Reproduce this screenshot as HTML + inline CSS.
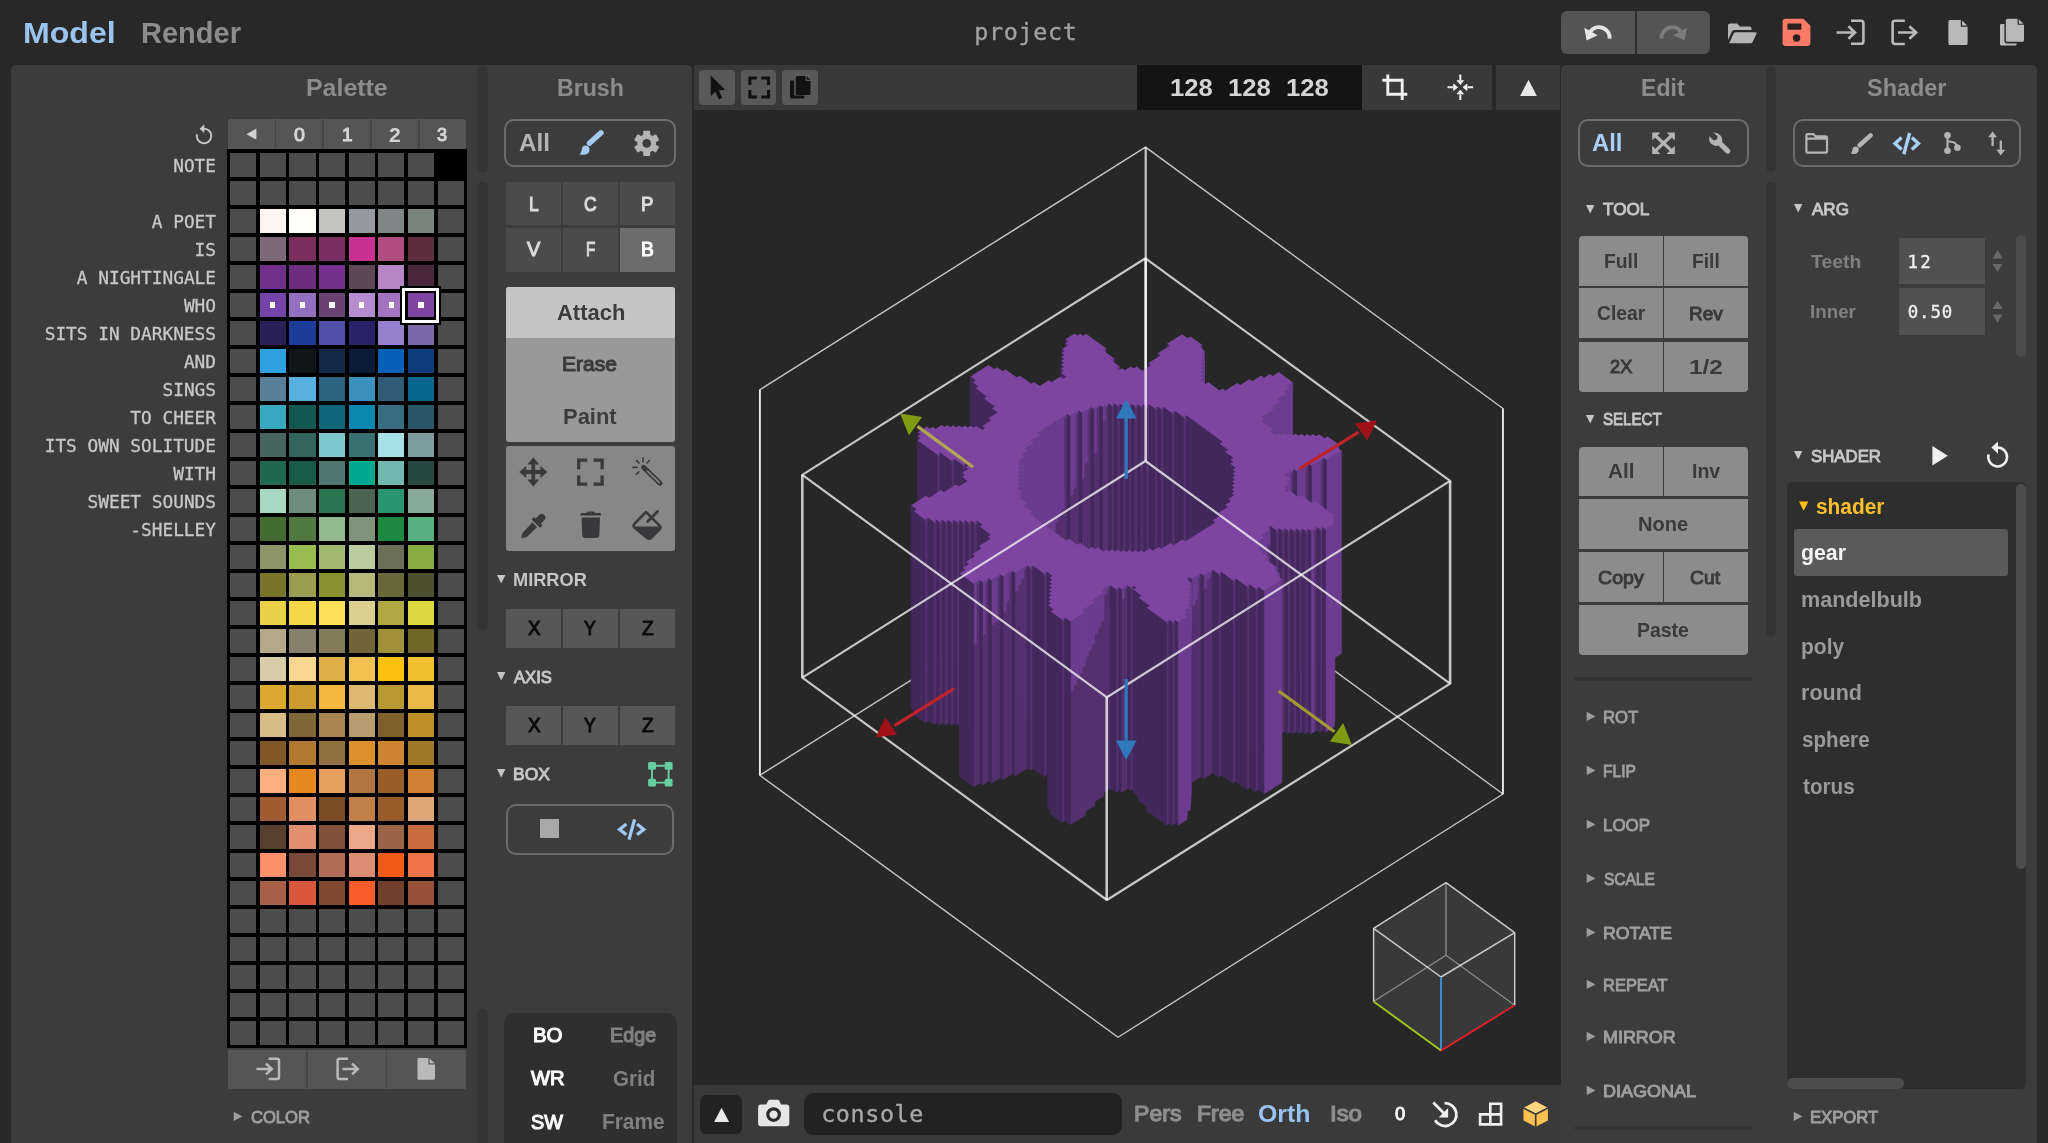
<!DOCTYPE html>
<html lang="en">
<head>
<meta charset="utf-8">
<title>MagicaVoxel - project</title>
<style>
html,body{margin:0;padding:0;}
body{width:2048px;height:1143px;overflow:hidden;background:#282828;position:relative;
 font-family:"Liberation Sans",sans-serif;font-weight:bold;color:#a0a0a0;}
.a{position:absolute;}
.t{position:absolute;white-space:nowrap;line-height:1;}
.c{text-align:center;}
.r{text-align:right;}
.m{font-family:"DejaVu Sans Mono","Liberation Mono",monospace;font-weight:normal;}
.pan{position:absolute;background:#3c3c3c;}
.trk{position:absolute;background:#343434;border-radius:5px;}
.btn{position:absolute;background:#8c8c8c;color:#3a3a3a;font-size:20px;line-height:1;text-align:center;border-radius:3px;}
.dk{position:absolute;background:#4b4b4b;color:#d2d2d2;font-size:23px;line-height:1;text-align:center;}
.sec{position:absolute;white-space:nowrap;line-height:1;font-size:18px;color:#a0a0a0;}
.rb{position:absolute;border:2px solid #5c5c5c;border-radius:12px;box-sizing:border-box;}
svg{position:absolute;overflow:visible;}
</style>
</head>
<body>
<div id="app" style="position:absolute;left:0;top:0;width:2048px;height:1143px;overflow:hidden;will-change:transform">
<!-- ===== top bar ===== -->
<div class="t" style="left:22.5px;top:16px;font-size:30.2px;line-height:33px;color:#9bc3ee;transform:scaleX(1.063);transform-origin:0 0;">Model</div>
<div class="t" style="left:141.1px;top:16px;font-size:30.2px;line-height:33px;color:#8c8c8c;transform:scaleX(0.961);transform-origin:0 0;">Render</div>
<div class="t m" style="left:974.2px;top:18px;font-size:23.4px;line-height:28px;color:#a2a2a2;-webkit-text-stroke:.35px #a2a2a2;letter-spacing:0.67px;">project</div>
<div class="a" style="left:1561px;top:10.5px;width:149px;height:43.5px;background:#545454;border-radius:6px"></div>
<div class="a" style="left:1634.5px;top:10.5px;width:2px;height:43.5px;background:#2c2c2c"></div>
<svg width="2048" height="64" style="left:0;top:0" viewBox="0 0 2048 64">
 <!-- undo -->
 <path d="M1609.6 38.6A10.6 10.6 0 0 0 1590.4 31.6" fill="none" stroke="#e6e6e6" stroke-width="4"/>
 <path d="M1584.3 27.8L1597.6 35.2L1586.6 40.6Z" fill="#e6e6e6"/>
 <!-- redo -->
 <path d="M1661.6 38.6A10.6 10.6 0 0 1 1680.8 31.6" fill="none" stroke="#7c7c7c" stroke-width="4"/>
 <path d="M1686.9 27.8L1673.6 35.2L1684.6 40.6Z" fill="#7c7c7c"/>
 <!-- folder open -->
 <path d="M1728 40V25.5Q1728 23.6 1730 23.6H1737L1740 26.6H1749.5Q1751.5 26.6 1751.5 28.6V30H1734.5Q1732.6 30 1731.8 31.8Z" fill="#b4b4b4"/>
 <path d="M1729.2 43.2L1733.6 33.6Q1734.3 32.2 1735.8 32.2H1755.4Q1757.2 32.2 1756.4 34L1752.6 42Q1752 43.2 1750.6 43.2Z" fill="#b4b4b4"/>
 <!-- save -->
 <path d="M1785.6 18.8H1803.4L1810.4 25.8V43Q1810.4 46 1807.4 46H1785.6Q1782.6 46 1782.6 43V21.8Q1782.6 18.8 1785.6 18.8Z" fill="#f97a66"/>
 <rect x="1787.4" y="23.6" width="14" height="6.2" rx=".8" fill="#2c2020"/>
 <circle cx="1796.6" cy="38" r="3.7" fill="#2c2020"/>
 <!-- import -->
 <g fill="none" stroke="#b9b9b9" stroke-width="2.6">
  <path d="M1851 20.8H1861Q1863.4 20.8 1863.4 23.2V41.4Q1863.4 43.8 1861 43.8H1851"/>
  <path d="M1836.6 32.5H1854.6M1848.4 26.2L1855 32.5L1848.4 38.8"/>
  <!-- export -->
  <path d="M1904.8 20.8H1895Q1892.6 20.8 1892.6 23.2V41.6Q1892.6 44 1895 44H1904.8"/>
  <path d="M1898 32.5H1916M1909.4 26.2L1916.2 32.5L1909.4 38.8"/>
 </g>
 <!-- file -->
 <path d="M1950 20H1960.8V26.8H1967.6V43.4Q1967.6 45 1966 45H1950Q1948.4 45 1948.4 43.4V21.6Q1948.4 20 1950 20Z" fill="#b9b9b9"/>
 <path d="M1962 20.4L1967.2 25.6H1962Z" fill="#b9b9b9"/>
 <!-- copy -->
 <path d="M2004.4 24V41Q2004.4 43.4 2006.8 43.4H2016.6V44.2Q2016.6 45.6 2015.2 45.6H2001.4Q2000 45.6 2000 44.2V25.4Q2000 24 2001.4 24Z" fill="#b9b9b9"/>
 <path d="M2007.4 18.8H2017.6V24.8H2024V40.2Q2024 41.8 2022.4 41.8H2007.4Q2005.8 41.8 2005.8 40.2V20.4Q2005.8 18.8 2007.4 18.8Z" fill="#b9b9b9"/>
 <path d="M2018.8 19.2L2023.6 23.8H2018.8Z" fill="#b9b9b9"/>
</svg>
<!-- ===== left block: palette + brush panels ===== -->
<div class="pan" style="left:11.4px;top:65px;width:680.2px;height:1090px;border-radius:5px 5px 0 0"></div>
<div class="trk" style="left:477px;top:65.5px;width:10.5px;height:106.5px"></div>
<div class="trk" style="left:477px;top:181.5px;width:10.5px;height:448px"></div>
<div class="trk" style="left:477px;top:1009px;width:10.5px;height:150px"></div>
<div class="t" style="left:305.7px;top:74px;font-size:24.4px;line-height:27px;color:#8c8c8c;transform:scaleX(1.021);transform-origin:0 0;">Palette</div>
<!-- tabs -->
<div class="a" style="left:228.4px;top:119px;width:237.4px;height:30px;background:#555;border-radius:3px 3px 0 0"></div>
<div class="a" style="left:274.6px;top:119px;width:1.6px;height:30px;background:#464646"></div>
<div class="a" style="left:322.3px;top:119px;width:1.6px;height:30px;background:#464646"></div>
<div class="a" style="left:370.3px;top:119px;width:1.6px;height:30px;background:#464646"></div>
<div class="a" style="left:418px;top:119px;width:1.6px;height:30px;background:#464646"></div>
<div class="t" style="left:294.0px;top:124px;font-size:18.7px;line-height:21px;color:#d4d4d4;font-weight:normal;-webkit-text-stroke:1.05px #d4d4d4;transform:scaleX(1.049);transform-origin:0 0;">0</div>
<div class="t" style="left:341.6px;top:124px;font-size:18.7px;line-height:21px;color:#d4d4d4;font-weight:normal;-webkit-text-stroke:1.05px #d4d4d4;transform:scaleX(1.019);transform-origin:0 0;">1</div>
<div class="t" style="left:388.9px;top:124px;font-size:20.2px;line-height:22px;color:#d4d4d4;transform:scaleX(1.051);transform-origin:0 0;">2</div>
<div class="t" style="left:437.0px;top:124px;font-size:18.7px;line-height:21px;color:#d4d4d4;font-weight:normal;-webkit-text-stroke:1.05px #d4d4d4;transform:scaleX(0.968);transform-origin:0 0;">3</div>
<svg width="300" height="40" style="left:180px;top:115px" viewBox="180 115 300 40">
 <path d="M246.4 134.2L256.4 128.6V139.6Z" fill="#d2d2d2"/>
 <path d="M204 128.6A7.3 7.3 0 1 1 196.9 134.2" fill="none" stroke="#c8c8c8" stroke-width="1.9"/>
 <path d="M199.6 128.7L204.3 124.3V133Z" fill="#c8c8c8"/>
</svg>
<!-- bottom buttons -->
<div class="a" style="left:228.4px;top:1050px;width:237.4px;height:38.7px;background:#555"></div>
<div class="a" style="left:305.8px;top:1050px;width:1.8px;height:38.7px;background:#464646"></div>
<div class="a" style="left:385.6px;top:1050px;width:1.8px;height:38.7px;background:#464646"></div>
<svg width="240" height="40" style="left:228px;top:1050px" viewBox="228 1050 240 40">
 <g fill="none" stroke="#b9b9b9" stroke-width="2.5">
  <path d="M268.6 1058.8H277Q279 1058.8 279 1060.8V1077Q279 1079 277 1079H268.6"/>
  <path d="M256.4 1069H271.4M266 1063.6L271.8 1069L266 1074.4"/>
  <path d="M348 1058.8H339.6Q337.6 1058.8 337.6 1060.8V1077Q337.6 1079 339.6 1079H348"/>
  <path d="M342.4 1069H357.6M352 1063.6L357.8 1069L352 1074.4"/>
 </g>
 <path d="M418.9 1058H428.4V1064.4H435V1078.4Q435 1079.8 433.6 1079.8H418.9Q417.5 1079.8 417.5 1078.4V1059.4Q417.5 1058 418.9 1058Z" fill="#b9b9b9"/>
 <path d="M429.6 1058.4L434.6 1063.2H429.6Z" fill="#b9b9b9"/>
</svg>
<svg width="12" height="12" style="left:232.7px;top:1111.0px" viewBox="232.7 1111.0 12 12"><path d="M233.4 1111.8l8.8 4.6l-8.8 4.6z" fill="#9e9e9e"/></svg><div class="t" style="left:250.7px;top:1107px;font-size:17.4px;line-height:20px;color:#9e9e9e;font-weight:normal;-webkit-text-stroke:0.98px #9e9e9e;transform:scaleX(0.953);transform-origin:0 0;">COLOR</div>
<style>
.pg{display:grid;grid-template-columns:repeat(8,26.10px);column-gap:3.56px;grid-auto-rows:24.20px;row-gap:3.80px;}
.pg i{display:block;background:#4c4c4c;position:relative;}
.pg b{position:absolute;left:10.3px;top:9.4px;width:5.4px;height:5.4px;background:#fff;}
</style>
<!-- ===== palette grid ===== -->
<div class="a" style="left:227px;top:149px;width:240px;height:899px;background:#000"></div>
<div class="a pg" style="left:230.15px;top:153.10px">
<i></i>
<i></i>
<i></i>
<i></i>
<i></i>
<i></i>
<i></i>
<i style="background:#000"></i>
<i></i>
<i></i>
<i></i>
<i></i>
<i></i>
<i></i>
<i></i>
<i></i>
<i></i>
<i style="background:#faf5ee"></i>
<i style="background:#fffff8"></i>
<i style="background:#c5c6c0"></i>
<i style="background:#939aa0"></i>
<i style="background:#808585"></i>
<i style="background:#78857c"></i>
<i></i>
<i></i>
<i style="background:#7d6878"></i>
<i style="background:#7a2e5e"></i>
<i style="background:#7a2f62"></i>
<i style="background:#c83290"></i>
<i style="background:#b04c80"></i>
<i style="background:#5f2e3e"></i>
<i></i>
<i></i>
<i style="background:#70308a"></i>
<i style="background:#6a2e7c"></i>
<i style="background:#76308e"></i>
<i style="background:#5c4858"></i>
<i style="background:#b886c4"></i>
<i style="background:#48283a"></i>
<i></i>
<i></i>
<i style="background:#7444a8"><b></b></i>
<i style="background:#9470c0"><b></b></i>
<i style="background:#684270"><b></b></i>
<i style="background:#b48cd0"><b></b></i>
<i style="background:#a574c0"><b></b></i>
<i style="background:#7d45a0"><b></b></i>
<i></i>
<i></i>
<i style="background:#2a2058"></i>
<i style="background:#1c3c98"></i>
<i style="background:#5050a8"></i>
<i style="background:#282468"></i>
<i style="background:#9480cc"></i>
<i style="background:#7a68a8"></i>
<i></i>
<i></i>
<i style="background:#2ea0e0"></i>
<i style="background:#101518"></i>
<i style="background:#142848"></i>
<i style="background:#0c1c38"></i>
<i style="background:#0860b8"></i>
<i style="background:#103c80"></i>
<i></i>
<i></i>
<i style="background:#587e98"></i>
<i style="background:#58b0e0"></i>
<i style="background:#2c6480"></i>
<i style="background:#3c90bc"></i>
<i style="background:#305c78"></i>
<i style="background:#086890"></i>
<i></i>
<i></i>
<i style="background:#38a8c0"></i>
<i style="background:#105850"></i>
<i style="background:#106478"></i>
<i style="background:#0c88b0"></i>
<i style="background:#386c80"></i>
<i style="background:#285868"></i>
<i></i>
<i></i>
<i style="background:#48645e"></i>
<i style="background:#346460"></i>
<i style="background:#7cc8cc"></i>
<i style="background:#387070"></i>
<i style="background:#a8e0e8"></i>
<i style="background:#7c9ca0"></i>
<i></i>
<i></i>
<i style="background:#206850"></i>
<i style="background:#185c48"></i>
<i style="background:#507870"></i>
<i style="background:#00a890"></i>
<i style="background:#70b8b0"></i>
<i style="background:#284840"></i>
<i></i>
<i></i>
<i style="background:#a8d8c0"></i>
<i style="background:#708c7c"></i>
<i style="background:#2c7450"></i>
<i style="background:#4c6450"></i>
<i style="background:#289470"></i>
<i style="background:#88a898"></i>
<i></i>
<i></i>
<i style="background:#446c30"></i>
<i style="background:#507840"></i>
<i style="background:#94b890"></i>
<i style="background:#80947c"></i>
<i style="background:#1c8840"></i>
<i style="background:#58b080"></i>
<i></i>
<i></i>
<i style="background:#8c9468"></i>
<i style="background:#98bc50"></i>
<i style="background:#a0b870"></i>
<i style="background:#b8cca0"></i>
<i style="background:#6c7058"></i>
<i style="background:#88ac40"></i>
<i></i>
<i></i>
<i style="background:#787428"></i>
<i style="background:#9c9c50"></i>
<i style="background:#889030"></i>
<i style="background:#b4b878"></i>
<i style="background:#686838"></i>
<i style="background:#4c5030"></i>
<i></i>
<i></i>
<i style="background:#e8d048"></i>
<i style="background:#f4d848"></i>
<i style="background:#fce058"></i>
<i style="background:#dcd090"></i>
<i style="background:#b0a840"></i>
<i style="background:#dcd840"></i>
<i></i>
<i></i>
<i style="background:#b4a888"></i>
<i style="background:#88806c"></i>
<i style="background:#847c58"></i>
<i style="background:#706438"></i>
<i style="background:#a09038"></i>
<i style="background:#706828"></i>
<i></i>
<i></i>
<i style="background:#d8cca8"></i>
<i style="background:#f8d890"></i>
<i style="background:#e0b048"></i>
<i style="background:#f0c050"></i>
<i style="background:#fcc010"></i>
<i style="background:#f0c030"></i>
<i></i>
<i></i>
<i style="background:#dca830"></i>
<i style="background:#cc9c30"></i>
<i style="background:#f4b840"></i>
<i style="background:#dcb870"></i>
<i style="background:#b89830"></i>
<i style="background:#e8b848"></i>
<i></i>
<i></i>
<i style="background:#d8bc88"></i>
<i style="background:#806838"></i>
<i style="background:#a88450"></i>
<i style="background:#b89c70"></i>
<i style="background:#80602c"></i>
<i style="background:#c09028"></i>
<i></i>
<i></i>
<i style="background:#805828"></i>
<i style="background:#b07830"></i>
<i style="background:#907040"></i>
<i style="background:#dc9030"></i>
<i style="background:#cc8430"></i>
<i style="background:#a07828"></i>
<i></i>
<i></i>
<i style="background:#fcb080"></i>
<i style="background:#e88820"></i>
<i style="background:#e8a060"></i>
<i style="background:#b07840"></i>
<i style="background:#986028"></i>
<i style="background:#cc8030"></i>
<i></i>
<i></i>
<i style="background:#a05c30"></i>
<i style="background:#e09060"></i>
<i style="background:#7c4c24"></i>
<i style="background:#c08048"></i>
<i style="background:#985c28"></i>
<i style="background:#e0a878"></i>
<i></i>
<i></i>
<i style="background:#584030"></i>
<i style="background:#e09070"></i>
<i style="background:#805038"></i>
<i style="background:#eca888"></i>
<i style="background:#9c6448"></i>
<i style="background:#c86c40"></i>
<i></i>
<i></i>
<i style="background:#fc9068"></i>
<i style="background:#784838"></i>
<i style="background:#b06c54"></i>
<i style="background:#dc8c70"></i>
<i style="background:#f05c18"></i>
<i style="background:#ec7448"></i>
<i></i>
<i></i>
<i style="background:#a86048"></i>
<i style="background:#d8583c"></i>
<i style="background:#804830"></i>
<i style="background:#f85c28"></i>
<i style="background:#70402c"></i>
<i style="background:#985038"></i>
<i></i>
<i></i>
<i></i>
<i></i>
<i></i>
<i></i>
<i></i>
<i></i>
<i></i>
<i></i>
<i></i>
<i></i>
<i></i>
<i></i>
<i></i>
<i></i>
<i></i>
<i></i>
<i></i>
<i></i>
<i></i>
<i></i>
<i></i>
<i></i>
<i></i>
<i></i>
<i></i>
<i></i>
<i></i>
<i></i>
<i></i>
<i></i>
<i></i>
<i></i>
<i></i>
<i></i>
<i></i>
<i></i>
<i></i>
<i></i>
<i></i>
</div>
<div class="a" style="left:402.4px;top:287.6px;width:37.0px;height:35.5px;border:3.6px solid #fff;outline:2.4px solid #000;box-sizing:border-box"></div>
<div class="t m r" style="left:16px;width:200px;top:156.6px;font-size:17.8px;color:#c8c8c8;-webkit-text-stroke:.3px #c8c8c8">NOTE</div>
<div class="t m r" style="left:16px;width:200px;top:212.6px;font-size:17.8px;color:#c8c8c8;-webkit-text-stroke:.3px #c8c8c8">A POET</div>
<div class="t m r" style="left:16px;width:200px;top:240.6px;font-size:17.8px;color:#c8c8c8;-webkit-text-stroke:.3px #c8c8c8">IS</div>
<div class="t m r" style="left:16px;width:200px;top:268.6px;font-size:17.8px;color:#c8c8c8;-webkit-text-stroke:.3px #c8c8c8">A NIGHTINGALE</div>
<div class="t m r" style="left:16px;width:200px;top:296.6px;font-size:17.8px;color:#c8c8c8;-webkit-text-stroke:.3px #c8c8c8">WHO</div>
<div class="t m r" style="left:16px;width:200px;top:324.6px;font-size:17.8px;color:#c8c8c8;-webkit-text-stroke:.3px #c8c8c8">SITS IN DARKNESS</div>
<div class="t m r" style="left:16px;width:200px;top:352.6px;font-size:17.8px;color:#c8c8c8;-webkit-text-stroke:.3px #c8c8c8">AND</div>
<div class="t m r" style="left:16px;width:200px;top:380.6px;font-size:17.8px;color:#c8c8c8;-webkit-text-stroke:.3px #c8c8c8">SINGS</div>
<div class="t m r" style="left:16px;width:200px;top:408.6px;font-size:17.8px;color:#c8c8c8;-webkit-text-stroke:.3px #c8c8c8">TO CHEER</div>
<div class="t m r" style="left:16px;width:200px;top:436.6px;font-size:17.8px;color:#c8c8c8;-webkit-text-stroke:.3px #c8c8c8">ITS OWN SOLITUDE</div>
<div class="t m r" style="left:16px;width:200px;top:464.6px;font-size:17.8px;color:#c8c8c8;-webkit-text-stroke:.3px #c8c8c8">WITH</div>
<div class="t m r" style="left:16px;width:200px;top:492.6px;font-size:17.8px;color:#c8c8c8;-webkit-text-stroke:.3px #c8c8c8">SWEET SOUNDS</div>
<div class="t m r" style="left:16px;width:200px;top:520.6px;font-size:17.8px;color:#c8c8c8;-webkit-text-stroke:.3px #c8c8c8">-SHELLEY</div>
<!-- ===== brush panel ===== -->
<div class="t" style="left:557.2px;top:74px;font-size:24.4px;line-height:27px;color:#8c8c8c;transform:scaleX(0.949);transform-origin:0 0;">Brush</div>
<div class="rb" style="left:504.3px;top:119.3px;width:172.2px;height:47.6px;border-color:#6c6c6c;border-width:2px;border-radius:10px"></div>
<div class="t" style="left:519.0px;top:129px;font-size:24.2px;line-height:27px;color:#b4b4b4;transform:scaleX(1.003);transform-origin:0 0;">All</div>
<svg width="200" height="50" style="left:500px;top:118px" viewBox="500 118 200 50">
 <path d="M589.4 143.2L601 132.8" stroke="#a2caf2" stroke-width="5.4" stroke-linecap="round" fill="none"/>
 <path d="M579.6 154.2Q581.6 152.6 581.8 149.4Q582.2 145.6 585.6 145.4Q589.2 145.4 589.6 149.2Q589.6 153.4 585.6 154.4Q582.4 155.2 579.6 154.2Z" fill="#a2caf2"/>
 <g transform="translate(646.7 143.4)" fill="#b4b4b4">
  <circle r="9.4"/>
  <rect x="-3.5" y="-12.6" width="7" height="6" rx="1"/>
  <rect x="-3.5" y="-12.6" width="7" height="6" rx="1" transform="rotate(60)"/>
  <rect x="-3.5" y="-12.6" width="7" height="6" rx="1" transform="rotate(120)"/>
  <rect x="-3.5" y="-12.6" width="7" height="6" rx="1" transform="rotate(180)"/>
  <rect x="-3.5" y="-12.6" width="7" height="6" rx="1" transform="rotate(240)"/>
  <rect x="-3.5" y="-12.6" width="7" height="6" rx="1" transform="rotate(300)"/>
  <circle r="4.3" fill="#3c3c3c"/>
 </g>
</svg>
<!-- shape buttons -->
<div class="dk" style="left:506px;top:181.7px;width:54.6px;height:43.4px"></div>
<div class="dk" style="left:563px;top:181.7px;width:55px;height:43.4px"></div>
<div class="dk" style="left:620.2px;top:181.7px;width:54.8px;height:43.4px"></div>
<div class="dk" style="left:506px;top:228px;width:54.6px;height:43.6px"></div>
<div class="dk" style="left:563px;top:228px;width:55px;height:43.6px"></div>
<div class="dk" style="left:620.2px;top:228px;width:54.8px;height:43.6px;background:#6c6c6c;color:#fff"></div>
<div class="t" style="left:529.0px;top:192px;font-size:21.0px;line-height:23px;color:#dadada;font-weight:normal;-webkit-text-stroke:1.18px #dadada;transform:scaleX(0.827);transform-origin:0 0;">L</div>
<div class="t" style="left:584.1px;top:192px;font-size:21.0px;line-height:23px;color:#dadada;font-weight:normal;-webkit-text-stroke:1.18px #dadada;transform:scaleX(0.827);transform-origin:0 0;">C</div>
<div class="t" style="left:641.0px;top:192px;font-size:21.0px;line-height:23px;color:#dadada;font-weight:normal;-webkit-text-stroke:1.18px #dadada;transform:scaleX(0.887);transform-origin:0 0;">P</div>
<div class="t" style="left:526.7px;top:237px;font-size:21.0px;line-height:23px;color:#dadada;font-weight:normal;-webkit-text-stroke:1.18px #dadada;transform:scaleX(0.945);transform-origin:0 0;">V</div>
<div class="t" style="left:586.0px;top:237px;font-size:21.0px;line-height:23px;color:#dadada;font-weight:normal;-webkit-text-stroke:1.18px #dadada;transform:scaleX(0.721);transform-origin:0 0;">F</div>
<div class="t" style="left:641.0px;top:237px;font-size:21.0px;line-height:23px;color:#ffffff;font-weight:normal;-webkit-text-stroke:1.18px #ffffff;transform:scaleX(0.919);transform-origin:0 0;">B</div>
<!-- mode buttons -->
<div class="a" style="left:506px;top:286.6px;width:169px;height:155.4px;background:#999;border-radius:3px"></div>
<div class="a" style="left:506px;top:286.6px;width:169px;height:51.9px;background:#c5c5c5;border-radius:3px 3px 0 0"></div>
<div class="t" style="left:556.5px;top:300px;font-size:21.8px;line-height:25px;color:#3c3c3e;transform:scaleX(1.007);transform-origin:0 0;">Attach</div>
<div class="t" style="left:562.4px;top:353px;font-size:20.2px;line-height:22px;color:#3c3c3e;font-weight:normal;-webkit-text-stroke:1.13px #3c3c3e;transform:scaleX(1.042);transform-origin:0 0;">Erase</div>
<div class="t" style="left:562.8px;top:404px;font-size:21.8px;line-height:25px;color:#3c3c3e;transform:scaleX(1.006);transform-origin:0 0;">Paint</div>
<!-- tool icons -->
<div class="a" style="left:506px;top:446.3px;width:169px;height:104.5px;background:#878787;border-radius:3px"></div>
<svg width="180" height="110" style="left:500px;top:444px" viewBox="500 444 180 110">
 <g fill="#39393b" stroke="none">
  <!-- move -->
  <path d="M533.3 457.6L539.4 464.6H535.2V470.1H540.4V465.9L547.4 472L540.4 478.1V473.9H535.2V479.4H539.4L533.3 486.4L527.2 479.4H531.4V473.9H526.2V478.1L519.2 472L526.2 465.9V470.1H531.4V464.6H527.2Z"/>
  <!-- trash -->
  <path d="M580.6 514.2Q580.6 513 581.8 513H586.4Q587 511.4 588.6 511.4H593Q594.6 511.4 595.2 513H599.8Q601 513 601 514.2V515.6H580.6Z"/>
  <path d="M581.6 517.6H600L599.4 535Q599.2 537.9 596.4 537.9H585.2Q582.4 537.9 582.2 535Z"/>
  <!-- eyedropper -->
  <path d="M521.3 537.6L522.6 532.8L532.4 522.6L537 527.2L526.8 537L522 538.2Z"/>
  <path d="M531.6 519.4L534 517L535.6 518.6L539.2 515Q541.8 512.6 544.4 515Q546.8 517.6 544.4 520.2L540.8 523.8L542.4 525.4L540 527.8Z"/>
  <!-- bucket -->
  <path d="M634 526.6H660.4Q660.8 528 659.8 529.4L651.6 537.6Q649.6 539.4 647.6 537.6L634.6 528.4Z"/>
 </g>
 <g fill="none" stroke="#39393b">
  <!-- select corners -->
  <path d="M578.7 469.2V460.2H587.2M593.6 460.2H602.1V469.2M602.1 475.4V484.2H593.6M587.2 484.2H578.7V475.4" stroke-width="3.3"/>
  <!-- wand -->
  <path d="M643.6 467.4L660 483.2" stroke-width="5" stroke-linecap="round"/>
  <path d="M647.4 471.2L659.4 482.6" stroke="#878787" stroke-width="1.6" stroke-linecap="round"/>
  <path d="M643 458V461.6M636.6 460.6L639 463M649.4 460.6L647 463M633 467.4H637M636.4 474.2L638.8 471.8" stroke-width="1.7" stroke-linecap="round"/>
  <!-- bucket outline -->
  <path d="M646 512L634.4 523.8Q632.8 525.6 634.4 527.4L647 538Q649.4 539.6 651.4 537.6L659.6 529.4Q661.4 527.6 659.8 525.8Z" stroke-width="2.6" stroke-linejoin="round"/>
  <path d="M647.6 521.4L657.6 511.6" stroke-width="2.8" stroke-linecap="round"/>
 </g>
</svg>
<!-- mirror / axis -->
<svg width="12" height="12" style="left:495.5px;top:574.3px" viewBox="495.5 574.3 12 12"><path d="M496.5 575.3h8.4l-4.2 8.4z" fill="#c6c6c6"/></svg><div class="t" style="left:512.7px;top:569px;font-size:18.8px;line-height:21px;color:#c6c6c6;transform:scaleX(0.969);transform-origin:0 0;">MIRROR</div>
<div class="dk" style="left:506px;top:608.6px;width:54.6px;height:39.2px;background:#575757"></div>
<div class="dk" style="left:563px;top:608.6px;width:55px;height:39.2px;background:#575757"></div>
<div class="dk" style="left:620.2px;top:608.6px;width:54.8px;height:39.2px;background:#575757"></div>
<div class="t" style="left:527.5px;top:617px;font-size:19.8px;line-height:22px;color:#0c0c0c;font-weight:normal;-webkit-text-stroke:1.11px #0c0c0c;transform:scaleX(0.950);transform-origin:0 0;">X</div>
<div class="t" style="left:584.4px;top:617px;font-size:19.8px;line-height:22px;color:#0c0c0c;font-weight:normal;-webkit-text-stroke:1.11px #0c0c0c;transform:scaleX(0.890);transform-origin:0 0;">Y</div>
<div class="t" style="left:641.9px;top:617px;font-size:19.8px;line-height:22px;color:#0c0c0c;font-weight:normal;-webkit-text-stroke:1.11px #0c0c0c;transform:scaleX(0.967);transform-origin:0 0;">Z</div>
<svg width="12" height="12" style="left:495.5px;top:671.3px" viewBox="495.5 671.3 12 12"><path d="M496.5 672.3h8.4l-4.2 8.4z" fill="#c6c6c6"/></svg><div class="t" style="left:514.4px;top:667px;font-size:17.4px;line-height:20px;color:#c6c6c6;font-weight:normal;-webkit-text-stroke:0.98px #c6c6c6;transform:scaleX(0.954);transform-origin:0 0;">AXIS</div>
<div class="dk" style="left:506px;top:705.6px;width:54.6px;height:39.2px;background:#575757"></div>
<div class="dk" style="left:563px;top:705.6px;width:55px;height:39.2px;background:#575757"></div>
<div class="dk" style="left:620.2px;top:705.6px;width:54.8px;height:39.2px;background:#575757"></div>
<div class="t" style="left:527.5px;top:714px;font-size:19.8px;line-height:22px;color:#0c0c0c;font-weight:normal;-webkit-text-stroke:1.11px #0c0c0c;transform:scaleX(0.950);transform-origin:0 0;">X</div>
<div class="t" style="left:584.4px;top:714px;font-size:19.8px;line-height:22px;color:#0c0c0c;font-weight:normal;-webkit-text-stroke:1.11px #0c0c0c;transform:scaleX(0.890);transform-origin:0 0;">Y</div>
<div class="t" style="left:641.9px;top:714px;font-size:19.8px;line-height:22px;color:#0c0c0c;font-weight:normal;-webkit-text-stroke:1.11px #0c0c0c;transform:scaleX(0.967);transform-origin:0 0;">Z</div>
<svg width="12" height="12" style="left:495.5px;top:768.4px" viewBox="495.5 768.4 12 12"><path d="M496.5 769.4h8.4l-4.2 8.4z" fill="#c6c6c6"/></svg><div class="t" style="left:513.0px;top:764px;font-size:17.4px;line-height:20px;color:#c6c6c6;font-weight:normal;-webkit-text-stroke:0.98px #c6c6c6;transform:scaleX(1.004);transform-origin:0 0;">BOX</div>
<svg width="40" height="40" style="left:640px;top:755px" viewBox="640 755 40 40">
 <path d="M652 765.8H668.6V782.6H652Z" fill="none" stroke="#68cda2" stroke-width="1.9"/>
 <g fill="#68cda2"><rect x="648.1" y="761.9" width="7.9" height="7.9" rx="1.6"/><rect x="664.7" y="761.9" width="7.9" height="7.9" rx="1.6"/><rect x="648.1" y="778.7" width="7.9" height="7.9" rx="1.6"/><rect x="664.7" y="778.7" width="7.9" height="7.9" rx="1.6"/></g>
</svg>
<div class="rb" style="left:506px;top:803.5px;width:168.4px;height:51px;border-color:#6c6c6c;border-width:2px;border-radius:10px"></div>
<div class="a" style="left:539.9px;top:819.4px;width:18.8px;height:18.7px;background:#a8a8a8"></div>
<svg width="40" height="30" style="left:612px;top:814px" viewBox="612 814 40 30"><path d="M626.4 824L619.6 829.4L626.4 834.8M637 824L643.8 829.4L637 834.8M634.6 819.4L629 839.6" fill="none" stroke="#a0c8f4" stroke-width="3.3"/></svg>
<!-- view options -->
<div class="a" style="left:504.1px;top:1013.4px;width:172.8px;height:140px;background:#2f2f2f;border-radius:10px"></div>
<div class="t" style="left:532.6px;top:1024px;font-size:20.0px;line-height:22px;color:#fafafa;font-weight:normal;-webkit-text-stroke:1.12px #fafafa;transform:scaleX(1.021);transform-origin:0 0;">BO</div>
<div class="t" style="left:531.0px;top:1067px;font-size:20.0px;line-height:22px;color:#fafafa;font-weight:normal;-webkit-text-stroke:1.12px #fafafa;transform:scaleX(1.007);transform-origin:0 0;">WR</div>
<div class="t" style="left:531.1px;top:1111px;font-size:20.0px;line-height:22px;color:#fafafa;font-weight:normal;-webkit-text-stroke:1.12px #fafafa;transform:scaleX(0.989);transform-origin:0 0;">SW</div>
<div class="t" style="left:610.1px;top:1024px;font-size:20.0px;line-height:22px;color:#808080;font-weight:normal;-webkit-text-stroke:1.12px #808080;transform:scaleX(0.989);transform-origin:0 0;">Edge</div>
<div class="t" style="left:612.7px;top:1066px;font-size:21.6px;line-height:25px;color:#808080;transform:scaleX(0.952);transform-origin:0 0;">Grid</div>
<div class="t" style="left:602.2px;top:1109px;font-size:21.6px;line-height:25px;color:#808080;transform:scaleX(0.965);transform-origin:0 0;">Frame</div>
<!-- ===== viewport ===== -->
<div class="a" style="left:693.5px;top:65px;width:867px;height:1090px;background:#272727"></div>
<svg width="867" height="976" style="left:693.5px;top:110px" viewBox="693.5 110 867 976">
 <!-- volume frame (back edges) -->
 <g fill="none" stroke="#fff" stroke-opacity=".74" stroke-width="1.35" stroke-linejoin="round">
  <path d="M1145 147.1L759.3 389.8V775.3L1117.5 1037.3L1502.5 794V408.5Z"/>
  <path d="M1145 532.6L759.3 775.3M1145 532.6L1502.5 794"/>
  <path d="M1145.2 147.1V532.6" stroke-width="2.2"/>
  <path d="M759.4 389.8V775.3M1502.4 408.5V794" stroke-width="1.9"/>
 </g>
<g stroke-width=".7" stroke-linejoin="round">
<path fill="#43285c" stroke="#43285c" d="M970 376.4l2.8 2l0 203l-2.8 -2zM972.8 378.4l2.7 2.1l0 203l-2.7 -2.1zM972.5 382.4l2.8 2l0 203l-2.8 -2zM975.3 384.4l2.8 2.1l0 203l-2.8 -2.1zM975.1 388.4l2.8 2l0 203l-2.8 -2zM977.9 390.4l2.8 2l0 203l-2.8 -2zM1065 339.2l2.8 2.1l0 203l-2.8 -2.1zM980.7 392.4l2.8 2.1l0 203l-2.8 -2.1zM917.5 432.3l2.8 2.1l0 203l-2.8 -2.1zM1064.8 343.2l2.8 2l0 203l-2.8 -2zM983.5 394.5l2.8 2l0 203l-2.8 -2zM917.3 436.3l2.8 2l0 203l-2.8 -2zM1061.6 349l2.7 2.1l0 203l-2.7 -2.1zM983.3 398.4l2.8 2.1l0 203l-2.8 -2.1zM917.1 440.2l2.7 2.1l0 203l-2.7 -2.1zM1061.3 353l2.8 2l0 203l-2.8 -2zM986.1 400.5l2.8 2l0 203l-2.8 -2zM919.8 442.3l2.8 2l0 203l-2.8 -2zM1061.1 356.9l2.8 2l0 203l-2.8 -2zM988.9 402.5l2.8 2l0 203l-2.8 -2zM922.6 444.3l2.8 2l0 203l-2.8 -2zM1060.9 360.8l2.8 2.1l0 203l-2.8 -2.1zM991.7 404.5l2.8 2.1l0 203l-2.8 -2.1zM925.4 446.3l2.8 2.1l0 203l-2.8 -2.1zM1060.7 364.8l2.8 2l0 203l-2.8 -2zM991.4 408.5l2.8 2l0 203l-2.8 -2zM928.2 448.4l2.8 2l0 203l-2.8 -2zM1060.5 368.7l2.8 2.1l0 203l-2.8 -2.1zM994.2 410.5l2.8 2.1l0 203l-2.8 -2.1zM931 450.4l2.8 2.1l0 203l-2.8 -2.1z"/>
<path fill="#6c3d8f" stroke="#6c3d8f" d="M1105.2 348.1l-3 1.9l0 51.5l3 -1.9z"/>
<path fill="#55316f" stroke="#55316f" d="M1105.2 399.6l-3 1.9l0 151.5l3 -1.9z"/>
<path fill="#43285c" stroke="#43285c" d="M1060.3 372.7l2.8 2l0 203l-2.8 -2zM988 418.3l2.8 2l0 203l-2.8 -2z"/>
<path fill="#6c3d8f" stroke="#6c3d8f" d="M939.6 452.6l-3 1.9l0 2.8l3 -1.9z"/>
<path fill="#55316f" stroke="#55316f" d="M939.6 455.4l-3 1.9l0 200.2l3 -1.9z"/>
<path fill="#43285c" stroke="#43285c" d="M933.8 452.5l2.8 2l0 203l-2.8 -2zM1063.1 374.7l2.7 2.1l0 203l-2.7 -2.1zM981.8 426l2.8 2.1l0 203l-2.8 -2.1zM939.6 452.6l2.8 2.1l0 203l-2.8 -2.1zM942.4 454.7l2.8 2l0 203l-2.8 -2zM945.2 456.7l2.8 2l0 203l-2.8 -2z"/>
<path fill="#6c3d8f" stroke="#6c3d8f" d="M1113.4 358.2l-3 1.9l0 36.6l3 -1.9z"/>
<path fill="#55316f" stroke="#55316f" d="M1113.4 394.8l-3 1.9l0 166.4l3 -1.9z"/>
<path fill="#6c3d8f" stroke="#6c3d8f" d="M953.8 458.9l-3 1.9l0 2.8l3 -1.9z"/>
<path fill="#55316f" stroke="#55316f" d="M953.8 461.7l-3 1.9l0 200.2l3 -1.9z"/>
<path fill="#43285c" stroke="#43285c" d="M948 458.7l2.8 2.1l0 203l-2.8 -2.1zM953.8 458.9l2.8 2l0 203l-2.8 -2zM956.6 460.9l2.8 2.1l0 203l-2.8 -2.1z"/>
<path fill="#6c3d8f" stroke="#6c3d8f" d="M1118.7 366.2l-3 1.9l0 25.9l3 -1.9z"/>
<path fill="#55316f" stroke="#55316f" d="M1118.7 392.1l-3 1.9l0 177.1l3 -1.9z"/>
<path fill="#6c3d8f" stroke="#6c3d8f" d="M965.2 463.1l-3 1.9l0 2.8l3 -1.9z"/>
<path fill="#55316f" stroke="#55316f" d="M965.2 465.9l-3 1.9l0 200.2l3 -1.9z"/>
<path fill="#43285c" stroke="#43285c" d="M959.4 463l2.8 2l0 203l-2.8 -2zM965.2 463.1l2.8 2.1l0 203l-2.8 -2.1zM965 467.1l2.8 2l0 203l-2.8 -2zM1166.5 343.7l2.8 2l0 203l-2.8 -2zM961.8 472.9l2.8 2l0 203l-2.8 -2zM910.6 505.2l2.8 2l0 203l-2.8 -2zM1157.2 353.3l2.8 2.1l0 203l-2.8 -2.1z"/>
<path fill="#6c3d8f" stroke="#6c3d8f" d="M1066.7 414.3l-3 1.9l0 2.8l3 -1.9z"/>
<path fill="#55316f" stroke="#55316f" d="M1066.7 417.1l-3 1.9l0 200.2l3 -1.9z"/>
<path fill="#6c3d8f" stroke="#6c3d8f" d="M1063.7 416.2l-3 1.9l0 92.7l3 -1.9z"/>
<path fill="#55316f" stroke="#55316f" d="M1063.7 508.9l-3 1.9l0 110.3l3 -1.9z"/>
<path fill="#6c3d8f" stroke="#6c3d8f" d="M1060.7 418.1l-3 1.9l0 97.7l3 -1.9z"/>
<path fill="#55316f" stroke="#55316f" d="M1060.7 515.8l-3 1.9l0 105.3l3 -1.9z"/>
<path fill="#6c3d8f" stroke="#6c3d8f" d="M1057.7 420l-3 1.9l0 101.8l3 -1.9z"/>
<path fill="#55316f" stroke="#55316f" d="M1057.7 521.8l-3 1.9l0 101.2l3 -1.9z"/>
<path fill="#6c3d8f" stroke="#6c3d8f" d="M1054.7 421.9l-3.1 1.9l0 110l3.1 -1.9z"/>
<path fill="#55316f" stroke="#55316f" d="M1054.7 531.9l-3.1 1.9l0 93l3.1 -1.9z"/>
<path fill="#6c3d8f" stroke="#6c3d8f" d="M1051.6 423.8l-3 1.9l0 114.2l3 -1.9z"/>
<path fill="#55316f" stroke="#55316f" d="M1051.6 538l-3 1.9l0 88.8l3 -1.9z"/>
<path fill="#6c3d8f" stroke="#6c3d8f" d="M1048.6 425.7l-3 1.9l0 119.1l3 -1.9z"/>
<path fill="#55316f" stroke="#55316f" d="M1048.6 544.8l-3 1.9l0 83.9l3 -1.9z"/>
<path fill="#6c3d8f" stroke="#6c3d8f" d="M1045.6 427.6l-3 1.9l0 123.2l3 -1.9z"/>
<path fill="#55316f" stroke="#55316f" d="M1045.6 550.8l-3 1.9l0 79.8l3 -1.9z"/>
<path fill="#6c3d8f" stroke="#6c3d8f" d="M1042.6 429.5l-3 1.9l0 127.4l3 -1.9z"/>
<path fill="#55316f" stroke="#55316f" d="M1042.6 556.9l-3 1.9l0 75.6l3 -1.9z"/>
<path fill="#6c3d8f" stroke="#6c3d8f" d="M1039.6 431.4l-3 1.9l0 131.5l3 -1.9z"/>
<path fill="#55316f" stroke="#55316f" d="M1039.6 562.9l-3 1.9l0 71.5l3 -1.9z"/>
<path fill="#43285c" stroke="#43285c" d="M961.5 476.8l2.8 2.1l0 203l-2.8 -2.1zM913.4 507.2l2.8 2.1l0 203l-2.8 -2.1zM1148 363l2.8 2l0 203l-2.8 -2z"/>
<path fill="#6c3d8f" stroke="#6c3d8f" d="M1078.5 410.6l-3 1.9l0 2.8l3 -1.9z"/>
<path fill="#55316f" stroke="#55316f" d="M1078.5 413.4l-3 1.9l0 200.2l3 -1.9z"/>
<path fill="#6c3d8f" stroke="#6c3d8f" d="M1075.5 412.5l-3 1.9l0 75.4l3 -1.9z"/>
<path fill="#55316f" stroke="#55316f" d="M1075.5 487.9l-3 1.9l0 127.6l3 -1.9z"/>
<path fill="#6c3d8f" stroke="#6c3d8f" d="M1072.5 414.4l-3 1.9l0 80.4l3 -1.9z"/>
<path fill="#55316f" stroke="#55316f" d="M1072.5 494.8l-3 1.9l0 122.6l3 -1.9z"/>
<path fill="#43285c" stroke="#43285c" d="M1066.7 414.3l2.8 2l0 203l-2.8 -2z"/>
<path fill="#6c3d8f" stroke="#6c3d8f" d="M1039.4 435.3l-3 1.9l0 136.5l3 -1.9z"/>
<path fill="#55316f" stroke="#55316f" d="M1039.4 571.8l-3 1.9l0 66.5l3 -1.9z"/>
<path fill="#6c3d8f" stroke="#6c3d8f" d="M1036.4 437.2l-3 1.9l0 140.6l3 -1.9z"/>
<path fill="#55316f" stroke="#55316f" d="M1036.4 577.8l-3 1.9l0 62.4l3 -1.9z"/>
<path fill="#6c3d8f" stroke="#6c3d8f" d="M1033.4 439.1l-3 1.9l0 144.7l3 -1.9z"/>
<path fill="#55316f" stroke="#55316f" d="M1033.4 583.8l-3 1.9l0 58.3l3 -1.9z"/>
<path fill="#43285c" stroke="#43285c" d="M964.3 478.9l2.8 2l0 203l-2.8 -2zM913.2 511.2l2.8 2l0 203l-2.8 -2z"/>
<path fill="#6c3d8f" stroke="#6c3d8f" d="M1090.4 407l-3.1 1.9l0 2.8l3.1 -1.9z"/>
<path fill="#55316f" stroke="#55316f" d="M1090.4 409.8l-3.1 1.9l0 200.2l3.1 -1.9z"/>
<path fill="#6c3d8f" stroke="#6c3d8f" d="M1087.3 408.9l-3 1.9l0 53.9l3 -1.9z"/>
<path fill="#55316f" stroke="#55316f" d="M1087.3 462.8l-3 1.9l0 149.1l3 -1.9z"/>
<path fill="#6c3d8f" stroke="#6c3d8f" d="M1084.3 410.8l-3 1.9l0 67.1l3 -1.9z"/>
<path fill="#55316f" stroke="#55316f" d="M1084.3 477.9l-3 1.9l0 135.9l3 -1.9z"/>
<path fill="#43285c" stroke="#43285c" d="M1078.5 410.6l2.8 2.1l0 203l-2.8 -2.1z"/>
<path fill="#6c3d8f" stroke="#6c3d8f" d="M1033.2 443.1l-3.1 1.9l0 148.8l3.1 -1.9z"/>
<path fill="#55316f" stroke="#55316f" d="M1033.2 591.9l-3.1 1.9l0 54.2l3.1 -1.9z"/>
<path fill="#6c3d8f" stroke="#6c3d8f" d="M1030.1 445l-3 1.9l0 152.9l3 -1.9z"/>
<path fill="#55316f" stroke="#55316f" d="M1030.1 597.9l-3 1.9l0 50.1l3 -1.9z"/>
<path fill="#6c3d8f" stroke="#6c3d8f" d="M1027.1 446.9l-3 1.9l0 157.9l3 -1.9z"/>
<path fill="#55316f" stroke="#55316f" d="M1027.1 604.8l-3 1.9l0 45.1l3 -1.9z"/>
<path fill="#43285c" stroke="#43285c" d="M916 513.2l2.8 2.1l0 203l-2.8 -2.1z"/>
<path fill="#6c3d8f" stroke="#6c3d8f" d="M1099.2 405.2l-3 1.9l0 2.8l3 -1.9z"/>
<path fill="#55316f" stroke="#55316f" d="M1099.2 408l-3 1.9l0 200.2l3 -1.9z"/>
<path fill="#6c3d8f" stroke="#6c3d8f" d="M1096.2 407.1l-3.1 1.9l0 45.7l3.1 -1.9z"/>
<path fill="#55316f" stroke="#55316f" d="M1096.2 452.8l-3.1 1.9l0 157.3l3.1 -1.9z"/>
<path fill="#43285c" stroke="#43285c" d="M1090.4 407l2.7 2l0 203l-2.7 -2z"/>
<path fill="#6c3d8f" stroke="#6c3d8f" d="M1026.9 450.8l-3 1.9l0 157.9l3 -1.9z"/>
<path fill="#55316f" stroke="#55316f" d="M1026.9 608.7l-3 1.9l0 45.1l3 -1.9z"/>
<path fill="#6c3d8f" stroke="#6c3d8f" d="M1023.9 452.7l-3 1.9l0 162l3 -1.9z"/>
<path fill="#55316f" stroke="#55316f" d="M1023.9 614.7l-3 1.9l0 41l3 -1.9z"/>
<path fill="#43285c" stroke="#43285c" d="M918.8 515.3l2.7 2l0 203l-2.7 -2z"/>
<path fill="#6c3d8f" stroke="#6c3d8f" d="M1201.3 344.6l-3 1.9l0 203l3 -1.9zM1108 403.5l-3 1.9l0 2.8l3 -1.9z"/>
<path fill="#55316f" stroke="#55316f" d="M1108 406.3l-3 1.9l0 200.2l3 -1.9z"/>
<path fill="#6c3d8f" stroke="#6c3d8f" d="M1105 405.4l-3 1.9l0 15.1l3 -1.9z"/>
<path fill="#55316f" stroke="#55316f" d="M1105 420.5l-3 1.9l0 187.9l3 -1.9z"/>
<path fill="#43285c" stroke="#43285c" d="M1099.2 405.2l2.8 2.1l0 203l-2.8 -2.1z"/>
<path fill="#6c3d8f" stroke="#6c3d8f" d="M1023.7 456.7l-3 1.9l0 164.5l3 -1.9z"/>
<path fill="#55316f" stroke="#55316f" d="M1023.7 621.2l-3 1.9l0 38.5l3 -1.9z"/>
<path fill="#6c3d8f" stroke="#6c3d8f" d="M1020.7 458.6l-3 1.9l0 166.1l3 -1.9z"/>
<path fill="#55316f" stroke="#55316f" d="M1020.7 624.7l-3 1.9l0 36.9l3 -1.9z"/>
<path fill="#6c3d8f" stroke="#6c3d8f" d="M927.4 517.5l-3.1 1.9l0 2.8l3.1 -1.9z"/>
<path fill="#55316f" stroke="#55316f" d="M927.4 520.3l-3.1 1.9l0 200.2l3.1 -1.9z"/>
<path fill="#43285c" stroke="#43285c" d="M921.5 517.3l2.8 2.1l0 203l-2.8 -2.1z"/>
<path fill="#6c3d8f" stroke="#6c3d8f" d="M1113.8 403.6l-3 1.9l0 2.8l3 -1.9z"/>
<path fill="#55316f" stroke="#55316f" d="M1113.8 406.4l-3 1.9l0 200.2l3 -1.9z"/>
<path fill="#43285c" stroke="#43285c" d="M1108 403.5l2.8 2l0 203l-2.8 -2z"/>
<path fill="#6c3d8f" stroke="#6c3d8f" d="M1020.5 462.5l-3.1 1.9l0 170.3l3.1 -1.9z"/>
<path fill="#55316f" stroke="#55316f" d="M1020.5 632.8l-3.1 1.9l0 32.7l3.1 -1.9z"/>
<path fill="#43285c" stroke="#43285c" d="M927.4 517.5l2.7 2l0 203l-2.7 -2z"/>
<path fill="#6c3d8f" stroke="#6c3d8f" d="M1203.9 350.5l-3 1.9l0 203l3 -1.9zM1119.6 403.7l-3 1.9l0 2.8l3 -1.9z"/>
<path fill="#55316f" stroke="#55316f" d="M1119.6 406.5l-3 1.9l0 200.2l3 -1.9z"/>
<path fill="#43285c" stroke="#43285c" d="M1113.8 403.6l2.8 2l0 203l-2.8 -2z"/>
<path fill="#6c3d8f" stroke="#6c3d8f" d="M1020.2 466.4l-3 1.9l0 170.3l3 -1.9z"/>
<path fill="#55316f" stroke="#55316f" d="M1020.2 636.7l-3 1.9l0 32.7l3 -1.9z"/>
<path fill="#6c3d8f" stroke="#6c3d8f" d="M935.9 519.6l-3 1.9l0 2.8l3 -1.9z"/>
<path fill="#55316f" stroke="#55316f" d="M935.9 522.4l-3 1.9l0 200.2l3 -1.9z"/>
<path fill="#43285c" stroke="#43285c" d="M930.1 519.5l2.8 2l0 203l-2.8 -2z"/>
<path fill="#6c3d8f" stroke="#6c3d8f" d="M1203.7 354.5l-3 1.9l0 203l3 -1.9zM1125.4 403.9l-3 1.9l0 2.8l3 -1.9z"/>
<path fill="#55316f" stroke="#55316f" d="M1125.4 406.7l-3 1.9l0 200.2l3 -1.9z"/>
<path fill="#43285c" stroke="#43285c" d="M1119.6 403.7l2.8 2.1l0 203l-2.8 -2.1z"/>
<path fill="#6c3d8f" stroke="#6c3d8f" d="M1020 470.4l-3 1.9l0 170.3l3 -1.9z"/>
<path fill="#55316f" stroke="#55316f" d="M1020 640.7l-3 1.9l0 32.7l3 -1.9z"/>
<path fill="#6c3d8f" stroke="#6c3d8f" d="M941.8 519.8l-3.1 1.9l0 2.8l3.1 -1.9z"/>
<path fill="#55316f" stroke="#55316f" d="M941.8 522.6l-3.1 1.9l0 200.2l3.1 -1.9z"/>
<path fill="#43285c" stroke="#43285c" d="M935.9 519.6l2.8 2.1l0 203l-2.8 -2.1z"/>
<path fill="#6c3d8f" stroke="#6c3d8f" d="M1203.5 358.4l-3.1 1.9l0 203l3.1 -1.9zM1131.2 404l-3 1.9l0 2.8l3 -1.9z"/>
<path fill="#55316f" stroke="#55316f" d="M1131.2 406.8l-3 1.9l0 200.2l3 -1.9z"/>
<path fill="#43285c" stroke="#43285c" d="M1125.4 403.9l2.8 2l0 203l-2.8 -2z"/>
<path fill="#6c3d8f" stroke="#6c3d8f" d="M1019.8 474.3l-3 1.9l0 175.2l3 -1.9z"/>
<path fill="#55316f" stroke="#55316f" d="M1019.8 649.5l-3 1.9l0 27.8l3 -1.9z"/>
<path fill="#6c3d8f" stroke="#6c3d8f" d="M947.6 519.9l-3.1 1.9l0 2.8l3.1 -1.9z"/>
<path fill="#55316f" stroke="#55316f" d="M947.6 522.7l-3.1 1.9l0 200.2l3.1 -1.9z"/>
<path fill="#43285c" stroke="#43285c" d="M941.8 519.8l2.7 2l0 203l-2.7 -2z"/>
<path fill="#6c3d8f" stroke="#6c3d8f" d="M1203.2 362.4l-3 1.9l0 203l3 -1.9zM1137 404.2l-3 1.9l0 2.8l3 -1.9z"/>
<path fill="#55316f" stroke="#55316f" d="M1137 407l-3 1.9l0 200.2l3 -1.9z"/>
<path fill="#43285c" stroke="#43285c" d="M1131.2 404l2.8 2.1l0 203l-2.8 -2.1z"/>
<path fill="#6c3d8f" stroke="#6c3d8f" d="M1019.6 478.3l-3 1.9l0 175.2l3 -1.9z"/>
<path fill="#55316f" stroke="#55316f" d="M1019.6 653.5l-3 1.9l0 27.8l3 -1.9z"/>
<path fill="#6c3d8f" stroke="#6c3d8f" d="M953.4 520.1l-3 1.9l0 2.8l3 -1.9z"/>
<path fill="#55316f" stroke="#55316f" d="M953.4 522.9l-3 1.9l0 200.2l3 -1.9z"/>
<path fill="#43285c" stroke="#43285c" d="M947.6 519.9l2.8 2.1l0 203l-2.8 -2.1z"/>
<path fill="#6c3d8f" stroke="#6c3d8f" d="M1203 366.3l-3 1.9l0 203l3 -1.9zM1142.8 404.3l-3 1.9l0 2.8l3 -1.9z"/>
<path fill="#55316f" stroke="#55316f" d="M1142.8 407.1l-3 1.9l0 200.2l3 -1.9z"/>
<path fill="#43285c" stroke="#43285c" d="M1137 404.2l2.8 2l0 203l-2.8 -2z"/>
<path fill="#6c3d8f" stroke="#6c3d8f" d="M1019.4 482.2l-3 1.9l0 175.2l3 -1.9z"/>
<path fill="#55316f" stroke="#55316f" d="M1019.4 657.4l-3 1.9l0 27.8l3 -1.9z"/>
<path fill="#6c3d8f" stroke="#6c3d8f" d="M959.2 520.2l-3 1.9l0 2.8l3 -1.9z"/>
<path fill="#55316f" stroke="#55316f" d="M959.2 523l-3 1.9l0 200.2l3 -1.9z"/>
<path fill="#43285c" stroke="#43285c" d="M953.4 520.1l2.8 2l0 203l-2.8 -2z"/>
<path fill="#6c3d8f" stroke="#6c3d8f" d="M1202.8 370.2l-3 1.9l0 203l3 -1.9zM1148.6 404.4l-3 1.9l0 2.9l3 -1.9z"/>
<path fill="#55316f" stroke="#55316f" d="M1148.6 407.3l-3 1.9l0 200.1l3 -1.9z"/>
<path fill="#43285c" stroke="#43285c" d="M1142.8 404.3l2.8 2l0 203l-2.8 -2z"/>
<path fill="#6c3d8f" stroke="#6c3d8f" d="M1019.2 486.1l-3 1.9l0 175.3l3 -1.9z"/>
<path fill="#55316f" stroke="#55316f" d="M1019.2 661.4l-3 1.9l0 27.7l3 -1.9z"/>
<path fill="#6c3d8f" stroke="#6c3d8f" d="M965 520.3l-3 1.9l0 2.9l3 -1.9z"/>
<path fill="#55316f" stroke="#55316f" d="M965 523.2l-3 1.9l0 200.1l3 -1.9z"/>
<path fill="#43285c" stroke="#43285c" d="M959.2 520.2l2.8 2l0 203l-2.8 -2z"/>
<path fill="#6c3d8f" stroke="#6c3d8f" d="M1202.6 374.2l-3 1.9l0 62.2l3 -1.9z"/>
<path fill="#55316f" stroke="#55316f" d="M1202.6 436.4l-3 1.9l0 140.8l3 -1.9z"/>
<path fill="#43285c" stroke="#43285c" d="M1148.6 404.4l2.8 2.1l0 203l-2.8 -2.1z"/>
<path fill="#6c3d8f" stroke="#6c3d8f" d="M970.8 520.5l-3 1.9l0 2.8l3 -1.9z"/>
<path fill="#55316f" stroke="#55316f" d="M970.8 523.3l-3 1.9l0 200.2l3 -1.9z"/>
<path fill="#43285c" stroke="#43285c" d="M965 520.3l2.8 2.1l0 203l-2.8 -2.1z"/>
<path fill="#6c3d8f" stroke="#6c3d8f" d="M1202.4 378.1l-3 1.9l0 46.6l3 -1.9z"/>
<path fill="#55316f" stroke="#55316f" d="M1202.4 424.7l-3 1.9l0 156.4l3 -1.9z"/>
<path fill="#6c3d8f" stroke="#6c3d8f" d="M1157.2 406.6l-3 1.9l0 2.8l3 -1.9z"/>
<path fill="#55316f" stroke="#55316f" d="M1157.2 409.4l-3 1.9l0 200.2l3 -1.9z"/>
<path fill="#43285c" stroke="#43285c" d="M1151.4 406.5l2.8 2l0 203l-2.8 -2z"/>
<path fill="#6c3d8f" stroke="#6c3d8f" d="M1021.7 492.1l-3 1.9l0 170.3l3 -1.9z"/>
<path fill="#55316f" stroke="#55316f" d="M1021.7 662.4l-3 1.9l0 32.7l3 -1.9z"/>
<path fill="#6c3d8f" stroke="#6c3d8f" d="M976.6 520.6l-3 1.9l0 2.8l3 -1.9z"/>
<path fill="#55316f" stroke="#55316f" d="M976.6 523.4l-3 1.9l0 200.2l3 -1.9z"/>
<path fill="#43285c" stroke="#43285c" d="M970.8 520.5l2.8 2l0 203l-2.8 -2z"/>
<path fill="#6c3d8f" stroke="#6c3d8f" d="M1163 406.8l-3 1.9l0 2.8l3 -1.9z"/>
<path fill="#55316f" stroke="#55316f" d="M1163 409.6l-3 1.9l0 200.2l3 -1.9z"/>
<path fill="#43285c" stroke="#43285c" d="M1157.2 406.6l2.8 2.1l0 203l-2.8 -2.1z"/>
<path fill="#6c3d8f" stroke="#6c3d8f" d="M1021.5 496.1l-3 1.9l0 170.3l3 -1.9z"/>
<path fill="#55316f" stroke="#55316f" d="M1021.5 666.4l-3 1.9l0 32.7l3 -1.9z"/>
<path fill="#43285c" stroke="#43285c" d="M976.6 520.6l2.8 2.1l0 203l-2.8 -2.1zM1163 406.8l2.8 2l0 203l-2.8 -2zM979.4 522.7l2.8 2l0 203l-2.8 -2zM1165.8 408.8l2.8 2.1l0 203l-2.8 -2.1zM979.2 526.6l2.8 2.1l0 203l-2.8 -2.1z"/>
<path fill="#6c3d8f" stroke="#6c3d8f" d="M1174.4 411l-3 1.9l0 2.8l3 -1.9z"/>
<path fill="#55316f" stroke="#55316f" d="M1174.4 413.8l-3 1.9l0 200.2l3 -1.9z"/>
<path fill="#43285c" stroke="#43285c" d="M1168.6 410.9l2.8 2l0 203l-2.8 -2z"/>
<path fill="#6c3d8f" stroke="#6c3d8f" d="M1026.9 504.1l-3 1.9l0 164.5l3 -1.9z"/>
<path fill="#55316f" stroke="#55316f" d="M1026.9 668.6l-3 1.9l0 38.5l3 -1.9z"/>
<path fill="#43285c" stroke="#43285c" d="M982 528.7l2.8 2l0 203l-2.8 -2zM1174.4 411l2.8 2l0 203l-2.8 -2zM984.8 530.7l2.7 2l0 203l-2.7 -2zM1177.2 413l2.8 2.1l0 203l-2.8 -2.1zM987.5 532.7l2.8 2.1l0 203l-2.8 -2.1z"/>
<path fill="#6c3d8f" stroke="#6c3d8f" d="M1185.8 415.2l-3 1.9l0 2.8l3 -1.9z"/>
<path fill="#55316f" stroke="#55316f" d="M1185.8 418l-3 1.9l0 200.2l3 -1.9z"/>
<path fill="#43285c" stroke="#43285c" d="M1180 415.1l2.8 2l0 203l-2.8 -2z"/>
<path fill="#6c3d8f" stroke="#6c3d8f" d="M1032.3 512.1l-3 1.9l0 157.9l3 -1.9z"/>
<path fill="#55316f" stroke="#55316f" d="M1032.3 670l-3 1.9l0 45.1l3 -1.9z"/>
<path fill="#43285c" stroke="#43285c" d="M987.3 536.7l2.8 2l0 203l-2.8 -2zM1185.8 415.2l2.8 2.1l0 203l-2.8 -2.1zM978.1 546.3l2.8 2.1l0 203l-2.8 -2.1zM1188.6 417.3l2.8 2l0 203l-2.8 -2zM971.8 554.1l2.8 2l0 203l-2.8 -2zM1191.4 419.3l2.8 2.1l0 203l-2.8 -2.1zM965.6 561.8l2.8 2.1l0 203l-2.8 -2.1zM1194.2 421.4l2.8 2l0 203l-2.8 -2zM962.4 567.7l2.8 2l0 203l-2.8 -2zM1197 423.4l2.8 2l0 203l-2.8 -2zM959.2 573.5l2.8 2l0 203l-2.8 -2zM1199.8 425.4l2.8 2.1l0 203l-2.8 -2.1zM962 575.5l2.7 2.1l0 203l-2.7 -2.1zM1202.6 427.5l2.8 2l0 203l-2.8 -2zM964.7 577.6l2.8 2l0 203l-2.8 -2zM1205.4 429.5l2.8 2.1l0 203l-2.8 -2.1zM967.5 579.6l2.8 2.1l0 203l-2.8 -2.1z"/>
<path fill="#6c3d8f" stroke="#6c3d8f" d="M1292.2 382.3l-6 3.8l0 203l6 -3.8z"/>
<path fill="#43285c" stroke="#43285c" d="M1208.2 431.6l2.8 2l0 203l-2.8 -2z"/>
<path fill="#6c3d8f" stroke="#6c3d8f" d="M979.1 579.9l-3 1.9l0 2.8l3 -1.9z"/>
<path fill="#55316f" stroke="#55316f" d="M979.1 582.7l-3 1.9l0 200.2l3 -1.9z"/>
<path fill="#6c3d8f" stroke="#6c3d8f" d="M976.1 581.8l-3 1.9l0 62.2l3 -1.9z"/>
<path fill="#55316f" stroke="#55316f" d="M976.1 644l-3 1.9l0 140.8l3 -1.9z"/>
<path fill="#43285c" stroke="#43285c" d="M970.3 581.7l2.8 2l0 203l-2.8 -2z"/>
<path fill="#6c3d8f" stroke="#6c3d8f" d="M1289 388.1l-6 3.8l0 203l6 -3.8z"/>
<path fill="#43285c" stroke="#43285c" d="M1211 433.6l2.8 2l0 203l-2.8 -2z"/>
<path fill="#6c3d8f" stroke="#6c3d8f" d="M988 578.1l-3 1.9l0 2.9l3 -1.9z"/>
<path fill="#55316f" stroke="#55316f" d="M988 581l-3 1.9l0 200.1l3 -1.9z"/>
<path fill="#6c3d8f" stroke="#6c3d8f" d="M985 580l-3.1 1.9l0 54l3.1 -1.9z"/>
<path fill="#55316f" stroke="#55316f" d="M985 634l-3.1 1.9l0 149l3.1 -1.9z"/>
<path fill="#43285c" stroke="#43285c" d="M979.1 579.9l2.8 2l0 203l-2.8 -2z"/>
<path fill="#6c3d8f" stroke="#6c3d8f" d="M1285.8 394l-9 5.7l0 203l9 -5.7z"/>
<path fill="#43285c" stroke="#43285c" d="M1213.8 435.6l2.7 2.1l0 203l-2.7 -2.1z"/>
<path fill="#6c3d8f" stroke="#6c3d8f" d="M999.8 574.5l-3 1.9l0 2.8l3 -1.9z"/>
<path fill="#55316f" stroke="#55316f" d="M999.8 577.3l-3 1.9l0 200.2l3 -1.9z"/>
<path fill="#6c3d8f" stroke="#6c3d8f" d="M996.8 576.4l-3 1.9l0 45.7l3 -1.9z"/>
<path fill="#55316f" stroke="#55316f" d="M996.8 622.1l-3 1.9l0 157.3l3 -1.9z"/>
<path fill="#6c3d8f" stroke="#6c3d8f" d="M993.8 578.3l-3 1.9l0 46.5l3 -1.9z"/>
<path fill="#55316f" stroke="#55316f" d="M993.8 624.8l-3 1.9l0 156.5l3 -1.9z"/>
<path fill="#43285c" stroke="#43285c" d="M988 578.1l2.8 2.1l0 203l-2.8 -2.1z"/>
<path fill="#6c3d8f" stroke="#6c3d8f" d="M1279.6 401.7l-9.1 5.7l0 203l9.1 -5.7z"/>
<path fill="#43285c" stroke="#43285c" d="M1216.5 437.7l2.8 2l0 203l-2.8 -2z"/>
<path fill="#6c3d8f" stroke="#6c3d8f" d="M1011.6 570.8l-3 1.9l0 2.8l3 -1.9z"/>
<path fill="#55316f" stroke="#55316f" d="M1011.6 573.6l-3 1.9l0 200.2l3 -1.9z"/>
<path fill="#6c3d8f" stroke="#6c3d8f" d="M1008.6 572.7l-3 1.9l0 28.4l3 -1.9z"/>
<path fill="#55316f" stroke="#55316f" d="M1008.6 601.1l-3 1.9l0 174.6l3 -1.9z"/>
<path fill="#6c3d8f" stroke="#6c3d8f" d="M1005.6 574.6l-3 1.9l0 36.7l3 -1.9z"/>
<path fill="#55316f" stroke="#55316f" d="M1005.6 611.3l-3 1.9l0 166.3l3 -1.9z"/>
<path fill="#43285c" stroke="#43285c" d="M999.8 574.5l2.8 2l0 203l-2.8 -2z"/>
<path fill="#6c3d8f" stroke="#6c3d8f" d="M1273.3 409.5l-12 7.6l0 203l12 -7.6z"/>
<path fill="#43285c" stroke="#43285c" d="M1219.3 439.7l2.8 2.1l0 203l-2.8 -2.1z"/>
<path fill="#6c3d8f" stroke="#6c3d8f" d="M1026.5 565.3l-3.1 1.9l0 2.8l3.1 -1.9z"/>
<path fill="#55316f" stroke="#55316f" d="M1026.5 568.1l-3.1 1.9l0 200.2l3.1 -1.9z"/>
<path fill="#6c3d8f" stroke="#6c3d8f" d="M1023.4 567.2l-3 1.9l0 11l3 -1.9z"/>
<path fill="#55316f" stroke="#55316f" d="M1023.4 578.2l-3 1.9l0 192l3 -1.9z"/>
<path fill="#6c3d8f" stroke="#6c3d8f" d="M1020.4 569.1l-3 1.9l0 15.2l3 -1.9z"/>
<path fill="#55316f" stroke="#55316f" d="M1020.4 584.3l-3 1.9l0 187.8l3 -1.9z"/>
<path fill="#6c3d8f" stroke="#6c3d8f" d="M1017.4 571l-3 1.9l0 20.1l3 -1.9z"/>
<path fill="#55316f" stroke="#55316f" d="M1017.4 591.1l-3 1.9l0 182.9l3 -1.9z"/>
<path fill="#43285c" stroke="#43285c" d="M1011.6 570.8l2.8 2.1l0 203l-2.8 -2.1z"/>
<path fill="#6c3d8f" stroke="#6c3d8f" d="M1264.1 419.1l-3 1.9l0 203l3 -1.9z"/>
<path fill="#43285c" stroke="#43285c" d="M1219.1 443.7l2.8 2l0 203l-2.8 -2z"/>
<path fill="#6c3d8f" stroke="#6c3d8f" d="M1032.3 565.4l-3.1 1.9l0 2.8l3.1 -1.9z"/>
<path fill="#55316f" stroke="#55316f" d="M1032.3 568.2l-3.1 1.9l0 200.2l3.1 -1.9z"/>
<path fill="#43285c" stroke="#43285c" d="M1026.5 565.3l2.7 2l0 203l-2.7 -2zM1221.9 445.7l2.8 2.1l0 203l-2.8 -2.1zM1032.3 565.4l2.8 2.1l0 203l-2.8 -2.1zM1224.7 447.8l2.8 2l0 203l-2.8 -2zM1035.1 567.5l2.7 2l0 203l-2.7 -2zM1224.5 451.7l2.8 2l0 203l-2.8 -2zM1037.8 569.5l2.8 2l0 203l-2.8 -2z"/>
<path fill="#6c3d8f" stroke="#6c3d8f" d="M1272.2 429.2l-3 1.9l0 203l3 -1.9z"/>
<path fill="#43285c" stroke="#43285c" d="M1227.3 453.7l2.8 2.1l0 203l-2.8 -2.1z"/>
<path fill="#6c3d8f" stroke="#6c3d8f" d="M1046.4 571.7l-3 1.9l0 2.8l3 -1.9z"/>
<path fill="#55316f" stroke="#55316f" d="M1046.4 574.5l-3 1.9l0 200.2l3 -1.9z"/>
<path fill="#43285c" stroke="#43285c" d="M1040.6 571.5l2.8 2.1l0 203l-2.8 -2.1zM1230.1 455.8l2.8 2l0 203l-2.8 -2zM1046.4 571.7l2.8 2l0 203l-2.8 -2zM1229.9 459.7l2.8 2.1l0 203l-2.8 -2.1zM1049.2 573.7l2.8 2.1l0 203l-2.8 -2.1zM1229.7 463.7l2.8 2l0 203l-2.8 -2zM1049 577.7l2.8 2l0 203l-2.8 -2zM1232.5 465.7l2.7 2.1l0 203l-2.7 -2.1zM1048.8 581.6l2.8 2.1l0 203l-2.8 -2.1zM1232.2 469.7l2.8 2l0 203l-2.8 -2zM1048.6 585.6l2.8 2l0 203l-2.8 -2zM1232 473.6l2.8 2l0 203l-2.8 -2zM1048.4 589.5l2.8 2l0 203l-2.8 -2zM1231.8 477.5l2.8 2.1l0 203l-2.8 -2.1zM1048.2 593.4l2.8 2.1l0 203l-2.8 -2.1zM1231.6 481.5l2.8 2l0 203l-2.8 -2zM1047.9 597.4l2.8 2l0 203l-2.8 -2zM1231.4 485.4l2.8 2.1l0 203l-2.8 -2.1zM1047.7 601.3l2.8 2.1l0 203l-2.8 -2.1zM1231.2 489.4l2.8 2l0 203l-2.8 -2zM1047.5 605.3l2.8 2l0 203l-2.8 -2zM1230.9 493.3l2.8 2l0 203l-2.8 -2zM1050.3 607.3l2.8 2l0 203l-2.8 -2zM1227.7 499.1l2.8 2.1l0 203l-2.8 -2.1zM1050.1 611.2l2.8 2.1l0 203l-2.8 -2.1zM1224.5 505l2.8 2l0 203l-2.8 -2zM1052.9 613.3l2.8 2l0 203l-2.8 -2z"/>
<path fill="#6c3d8f" stroke="#6c3d8f" d="M1293.3 469.2l-3 1.9l0 2.8l3 -1.9z"/>
<path fill="#55316f" stroke="#55316f" d="M1293.3 472l-3 1.9l0 200.2l3 -1.9z"/>
<path fill="#6c3d8f" stroke="#6c3d8f" d="M1290.3 471.1l-6 3.8l0 203l6 -3.8z"/>
<path fill="#43285c" stroke="#43285c" d="M1218.2 512.7l2.8 2.1l0 203l-2.8 -2.1z"/>
<path fill="#6c3d8f" stroke="#6c3d8f" d="M1109.7 585.1l-3.1 1.9l0 2.8l3.1 -1.9z"/>
<path fill="#55316f" stroke="#55316f" d="M1109.7 587.9l-3.1 1.9l0 200.2l3.1 -1.9z"/>
<path fill="#6c3d8f" stroke="#6c3d8f" d="M1106.6 587l-3 1.9l0 6.9l3 -1.9z"/>
<path fill="#55316f" stroke="#55316f" d="M1106.6 593.9l-3 1.9l0 196.1l3 -1.9z"/>
<path fill="#6c3d8f" stroke="#6c3d8f" d="M1103.6 588.9l-3 1.9l0 15.2l3 -1.9z"/>
<path fill="#55316f" stroke="#55316f" d="M1103.6 604.1l-3 1.9l0 187.8l3 -1.9z"/>
<path fill="#43285c" stroke="#43285c" d="M1055.7 615.3l2.8 2.1l0 203l-2.8 -2.1z"/>
<path fill="#6c3d8f" stroke="#6c3d8f" d="M1338.2 444.6l-3 1.9l0 203l3 -1.9zM1308.1 463.6l-3 1.9l0 2.8l3 -1.9z"/>
<path fill="#55316f" stroke="#55316f" d="M1308.1 466.4l-3 1.9l0 200.2l3 -1.9z"/>
<path fill="#6c3d8f" stroke="#6c3d8f" d="M1305.1 465.5l-9 5.7l0 203l9 -5.7z"/>
<path fill="#43285c" stroke="#43285c" d="M1293.3 469.2l2.8 2l0 203l-2.8 -2zM1212 520.5l2.8 2l0 203l-2.8 -2zM1109.7 585.1l2.7 2l0 203l-2.7 -2z"/>
<path fill="#6c3d8f" stroke="#6c3d8f" d="M1103.4 592.8l-3 1.9l0 28.4l3 -1.9z"/>
<path fill="#55316f" stroke="#55316f" d="M1103.4 621.2l-3 1.9l0 174.6l3 -1.9z"/>
<path fill="#6c3d8f" stroke="#6c3d8f" d="M1100.4 594.7l-3 1.9l0 32.5l3 -1.9z"/>
<path fill="#55316f" stroke="#55316f" d="M1100.4 627.2l-3 1.9l0 170.5l3 -1.9z"/>
<path fill="#6c3d8f" stroke="#6c3d8f" d="M1097.4 596.6l-6 3.8l0 36.6l6 -3.8z"/>
<path fill="#55316f" stroke="#55316f" d="M1097.4 633.2l-6 3.8l0 166.4l6 -3.8z"/>
<path fill="#6c3d8f" stroke="#6c3d8f" d="M1064.3 617.5l-3 1.9l0 2.8l3 -1.9z"/>
<path fill="#55316f" stroke="#55316f" d="M1064.3 620.3l-3 1.9l0 200.2l3 -1.9z"/>
<path fill="#43285c" stroke="#43285c" d="M1058.5 617.4l2.8 2l0 203l-2.8 -2z"/>
<path fill="#6c3d8f" stroke="#6c3d8f" d="M1323 458.1l-3 1.9l0 2.8l3 -1.9z"/>
<path fill="#55316f" stroke="#55316f" d="M1323 460.9l-3 1.9l0 200.2l3 -1.9z"/>
<path fill="#6c3d8f" stroke="#6c3d8f" d="M1320 460l-9.1 5.7l0 203l9.1 -5.7z"/>
<path fill="#43285c" stroke="#43285c" d="M1308.1 463.6l2.8 2.1l0 203l-2.8 -2.1z"/>
<path fill="#6c3d8f" stroke="#6c3d8f" d="M1289.9 479l-3.1 1.9l0 203l3.1 -1.9zM1118.3 587.3l-3.1 1.9l0 2.8l3.1 -1.9z"/>
<path fill="#55316f" stroke="#55316f" d="M1118.3 590.1l-3.1 1.9l0 200.2l3.1 -1.9z"/>
<path fill="#43285c" stroke="#43285c" d="M1112.4 587.1l2.8 2.1l0 203l-2.8 -2.1z"/>
<path fill="#6c3d8f" stroke="#6c3d8f" d="M1094.2 602.5l-3 1.9l0 41.5l3 -1.9z"/>
<path fill="#55316f" stroke="#55316f" d="M1094.2 644l-3 1.9l0 161.5l3 -1.9z"/>
<path fill="#6c3d8f" stroke="#6c3d8f" d="M1091.2 604.4l-3.1 1.9l0 45.7l3.1 -1.9z"/>
<path fill="#55316f" stroke="#55316f" d="M1091.2 650.1l-3.1 1.9l0 157.3l3.1 -1.9z"/>
<path fill="#6c3d8f" stroke="#6c3d8f" d="M1088.1 606.3l-3 1.9l0 49.8l3 -1.9z"/>
<path fill="#55316f" stroke="#55316f" d="M1088.1 656.1l-3 1.9l0 153.2l3 -1.9z"/>
<path fill="#6c3d8f" stroke="#6c3d8f" d="M1085.1 608.2l-3 1.9l0 51.4l3 -1.9z"/>
<path fill="#55316f" stroke="#55316f" d="M1085.1 659.6l-3 1.9l0 151.6l3 -1.9z"/>
<path fill="#43285c" stroke="#43285c" d="M1064.3 617.5l2.8 2.1l0 203l-2.8 -2.1z"/>
<path fill="#6c3d8f" stroke="#6c3d8f" d="M1340.8 450.6l-15 9.5l0 203l15 -9.5z"/>
<path fill="#43285c" stroke="#43285c" d="M1323 458.1l2.8 2l0 203l-2.8 -2z"/>
<path fill="#6c3d8f" stroke="#6c3d8f" d="M1289.6 482.9l-6 3.8l0 203l6 -3.8zM1127.1 585.5l-3 1.9l0 2.8l3 -1.9z"/>
<path fill="#55316f" stroke="#55316f" d="M1127.1 588.3l-3 1.9l0 200.2l3 -1.9z"/>
<path fill="#6c3d8f" stroke="#6c3d8f" d="M1124.1 587.4l-3.1 1.9l0 11.1l3.1 -1.9z"/>
<path fill="#55316f" stroke="#55316f" d="M1124.1 598.5l-3.1 1.9l0 191.9l3.1 -1.9z"/>
<path fill="#43285c" stroke="#43285c" d="M1118.3 587.3l2.7 2l0 203l-2.7 -2z"/>
<path fill="#6c3d8f" stroke="#6c3d8f" d="M1084.9 612.1l-3 1.9l0 54l3 -1.9z"/>
<path fill="#55316f" stroke="#55316f" d="M1084.9 666.1l-3 1.9l0 149l3 -1.9z"/>
<path fill="#6c3d8f" stroke="#6c3d8f" d="M1081.9 614l-3 1.9l0 58.9l3 -1.9z"/>
<path fill="#55316f" stroke="#55316f" d="M1081.9 672.9l-3 1.9l0 144.1l3 -1.9z"/>
<path fill="#6c3d8f" stroke="#6c3d8f" d="M1078.9 615.9l-3 1.9l0 63l3 -1.9z"/>
<path fill="#55316f" stroke="#55316f" d="M1078.9 678.9l-3 1.9l0 140l3 -1.9z"/>
<path fill="#6c3d8f" stroke="#6c3d8f" d="M1075.9 617.8l-3 1.9l0 67.2l3 -1.9z"/>
<path fill="#55316f" stroke="#55316f" d="M1075.9 685l-3 1.9l0 135.8l3 -1.9z"/>
<path fill="#6c3d8f" stroke="#6c3d8f" d="M1072.9 619.7l-3 1.9l0 71.3l3 -1.9z"/>
<path fill="#55316f" stroke="#55316f" d="M1072.9 691l-3 1.9l0 131.7l3 -1.9z"/>
<path fill="#43285c" stroke="#43285c" d="M1067.1 619.6l2.8 2l0 203l-2.8 -2z"/>
<path fill="#6c3d8f" stroke="#6c3d8f" d="M1286.4 488.7l-3 1.9l0 203l3 -1.9zM1132.9 585.6l-3 1.9l0 2.8l3 -1.9z"/>
<path fill="#55316f" stroke="#55316f" d="M1132.9 588.4l-3 1.9l0 200.2l3 -1.9z"/>
<path fill="#43285c" stroke="#43285c" d="M1127.1 585.5l2.8 2l0 203l-2.8 -2zM1132.9 585.6l2.8 2.1l0 203l-2.8 -2.1zM1132.7 589.6l2.8 2l0 203l-2.8 -2zM1135.5 591.6l2.7 2.1l0 203l-2.7 -2.1zM1138.2 593.7l2.8 2l0 203l-2.8 -2zM1138 597.6l2.8 2.1l0 203l-2.8 -2.1zM1140.8 599.7l2.8 2l0 203l-2.8 -2z"/>
<path fill="#6c3d8f" stroke="#6c3d8f" d="M1269.8 525.8l-3 1.9l0 2.8l3 -1.9z"/>
<path fill="#55316f" stroke="#55316f" d="M1269.8 528.6l-3 1.9l0 200.2l3 -1.9z"/>
<path fill="#6c3d8f" stroke="#6c3d8f" d="M1188.6 577.1l-3 1.9l0 2.8l3 -1.9z"/>
<path fill="#55316f" stroke="#55316f" d="M1188.6 579.9l-3 1.9l0 200.2l3 -1.9z"/>
<path fill="#43285c" stroke="#43285c" d="M1143.6 601.7l2.8 2l0 203l-2.8 -2zM1269.8 525.8l2.8 2.1l0 203l-2.8 -2.1z"/>
<path fill="#6c3d8f" stroke="#6c3d8f" d="M1269.6 529.8l-3 1.9l0 15.2l3 -1.9z"/>
<path fill="#55316f" stroke="#55316f" d="M1269.6 545l-3 1.9l0 187.8l3 -1.9z"/>
<path fill="#6c3d8f" stroke="#6c3d8f" d="M1266.6 531.7l-6 3.8l0 203l6 -3.8zM1200.4 573.5l-3 1.9l0 2.8l3 -1.9z"/>
<path fill="#55316f" stroke="#55316f" d="M1200.4 576.3l-3 1.9l0 200.2l3 -1.9z"/>
<path fill="#6c3d8f" stroke="#6c3d8f" d="M1197.4 575.4l-3 1.9l0 24.2l3 -1.9z"/>
<path fill="#55316f" stroke="#55316f" d="M1197.4 599.6l-3 1.9l0 178.8l3 -1.9z"/>
<path fill="#6c3d8f" stroke="#6c3d8f" d="M1194.4 577.3l-3 1.9l0 28.4l3 -1.9z"/>
<path fill="#55316f" stroke="#55316f" d="M1194.4 605.7l-3 1.9l0 174.6l3 -1.9z"/>
<path fill="#43285c" stroke="#43285c" d="M1188.6 577.1l2.8 2.1l0 203l-2.8 -2.1zM1146.4 603.7l2.8 2.1l0 203l-2.8 -2.1z"/>
<path fill="#6c3d8f" stroke="#6c3d8f" d="M1278.4 528l-3 1.9l0 2.8l3 -1.9z"/>
<path fill="#55316f" stroke="#55316f" d="M1278.4 530.8l-3 1.9l0 200.2l3 -1.9z"/>
<path fill="#43285c" stroke="#43285c" d="M1272.6 527.9l2.8 2l0 203l-2.8 -2z"/>
<path fill="#6c3d8f" stroke="#6c3d8f" d="M1263.4 537.5l-9 5.7l0 203l9 -5.7zM1212.2 569.8l-3 1.9l0 2.8l3 -1.9z"/>
<path fill="#55316f" stroke="#55316f" d="M1212.2 572.6l-3 1.9l0 200.2l3 -1.9z"/>
<path fill="#6c3d8f" stroke="#6c3d8f" d="M1209.2 571.7l-3 1.9l0 7l3 -1.9z"/>
<path fill="#55316f" stroke="#55316f" d="M1209.2 578.7l-3 1.9l0 196l3 -1.9z"/>
<path fill="#6c3d8f" stroke="#6c3d8f" d="M1206.2 573.6l-3 1.9l0 15.2l3 -1.9z"/>
<path fill="#55316f" stroke="#55316f" d="M1206.2 588.8l-3 1.9l0 187.8l3 -1.9z"/>
<path fill="#43285c" stroke="#43285c" d="M1200.4 573.5l2.8 2l0 203l-2.8 -2z"/>
<path fill="#6c3d8f" stroke="#6c3d8f" d="M1191.1 583.1l-3 1.9l0 41.6l3 -1.9z"/>
<path fill="#55316f" stroke="#55316f" d="M1191.1 624.7l-3 1.9l0 161.4l3 -1.9z"/>
<path fill="#43285c" stroke="#43285c" d="M1146.2 607.7l2.8 2l0 203l-2.8 -2z"/>
<path fill="#6c3d8f" stroke="#6c3d8f" d="M1284.3 528.2l-3.1 1.9l0 2.8l3.1 -1.9z"/>
<path fill="#55316f" stroke="#55316f" d="M1284.3 531l-3.1 1.9l0 200.2l3.1 -1.9z"/>
<path fill="#43285c" stroke="#43285c" d="M1278.4 528l2.8 2.1l0 203l-2.8 -2.1zM1212.2 569.8l2.8 2.1l0 203l-2.8 -2.1z"/>
<path fill="#6c3d8f" stroke="#6c3d8f" d="M1190.9 587.1l-3 1.9l0 45.7l3 -1.9z"/>
<path fill="#55316f" stroke="#55316f" d="M1190.9 632.8l-3 1.9l0 157.3l3 -1.9z"/>
<path fill="#43285c" stroke="#43285c" d="M1149 609.7l2.8 2.1l0 203l-2.8 -2.1z"/>
<path fill="#6c3d8f" stroke="#6c3d8f" d="M1290.1 528.3l-3.1 1.9l0 2.8l3.1 -1.9z"/>
<path fill="#55316f" stroke="#55316f" d="M1290.1 531.1l-3.1 1.9l0 200.2l3.1 -1.9z"/>
<path fill="#43285c" stroke="#43285c" d="M1284.3 528.2l2.7 2l0 203l-2.7 -2z"/>
<path fill="#6c3d8f" stroke="#6c3d8f" d="M1260 547.3l-3.1 1.9l0 203l3.1 -1.9zM1220.8 572l-3 1.9l0 2.8l3 -1.9z"/>
<path fill="#55316f" stroke="#55316f" d="M1220.8 574.8l-3 1.9l0 200.2l3 -1.9z"/>
<path fill="#43285c" stroke="#43285c" d="M1215 571.9l2.8 2l0 203l-2.8 -2z"/>
<path fill="#6c3d8f" stroke="#6c3d8f" d="M1190.7 591l-3 1.9l0 58.9l3 -1.9z"/>
<path fill="#55316f" stroke="#55316f" d="M1190.7 649.9l-3 1.9l0 144.1l3 -1.9z"/>
<path fill="#43285c" stroke="#43285c" d="M1151.8 611.8l2.8 2l0 203l-2.8 -2z"/>
<path fill="#6c3d8f" stroke="#6c3d8f" d="M1295.9 528.5l-3 1.9l0 2.8l3 -1.9z"/>
<path fill="#55316f" stroke="#55316f" d="M1295.9 531.3l-3 1.9l0 200.2l3 -1.9z"/>
<path fill="#43285c" stroke="#43285c" d="M1290.1 528.3l2.8 2.1l0 203l-2.8 -2.1zM1220.8 572l2.8 2.1l0 203l-2.8 -2.1z"/>
<path fill="#6c3d8f" stroke="#6c3d8f" d="M1190.5 595l-3 1.9l0 203l3 -1.9z"/>
<path fill="#43285c" stroke="#43285c" d="M1154.6 613.8l2.8 2.1l0 203l-2.8 -2.1z"/>
<path fill="#6c3d8f" stroke="#6c3d8f" d="M1301.7 528.6l-3 1.9l0 2.8l3 -1.9z"/>
<path fill="#55316f" stroke="#55316f" d="M1301.7 531.4l-3 1.9l0 200.2l3 -1.9z"/>
<path fill="#43285c" stroke="#43285c" d="M1295.9 528.5l2.8 2l0 203l-2.8 -2zM1223.6 574.1l2.8 2l0 203l-2.8 -2z"/>
<path fill="#6c3d8f" stroke="#6c3d8f" d="M1190.3 598.9l-3 1.9l0 203l3 -1.9z"/>
<path fill="#43285c" stroke="#43285c" d="M1157.4 615.9l2.8 2l0 203l-2.8 -2z"/>
<path fill="#6c3d8f" stroke="#6c3d8f" d="M1307.5 528.7l-3 1.9l0 2.8l3 -1.9z"/>
<path fill="#55316f" stroke="#55316f" d="M1307.5 531.5l-3 1.9l0 200.2l3 -1.9z"/>
<path fill="#43285c" stroke="#43285c" d="M1301.7 528.6l2.8 2l0 203l-2.8 -2zM1226.4 576.1l2.8 2l0 203l-2.8 -2z"/>
<path fill="#6c3d8f" stroke="#6c3d8f" d="M1190.1 602.8l-3 1.9l0 203l3 -1.9z"/>
<path fill="#43285c" stroke="#43285c" d="M1160.2 617.9l2.8 2l0 203l-2.8 -2z"/>
<path fill="#6c3d8f" stroke="#6c3d8f" d="M1334.3 515.6l-3 1.9l0 203l3 -1.9zM1316.3 527l-3 1.9l0 2.8l3 -1.9z"/>
<path fill="#55316f" stroke="#55316f" d="M1316.3 529.8l-3 1.9l0 200.2l3 -1.9z"/>
<path fill="#6c3d8f" stroke="#6c3d8f" d="M1313.3 528.9l-3 1.9l0 203l3 -1.9z"/>
<path fill="#43285c" stroke="#43285c" d="M1307.5 528.7l2.8 2.1l0 203l-2.8 -2.1z"/>
<path fill="#6c3d8f" stroke="#6c3d8f" d="M1268.1 557.4l-3 1.9l0 203l3 -1.9zM1235 578.3l-3 1.9l0 2.8l3 -1.9z"/>
<path fill="#55316f" stroke="#55316f" d="M1235 581.1l-3 1.9l0 200.2l3 -1.9z"/>
<path fill="#43285c" stroke="#43285c" d="M1229.2 578.1l2.8 2.1l0 203l-2.8 -2.1z"/>
<path fill="#6c3d8f" stroke="#6c3d8f" d="M1189.8 606.8l-6 3.8l0 203l6 -3.8zM1168.8 620.1l-3 1.9l0 2.8l3 -1.9z"/>
<path fill="#55316f" stroke="#55316f" d="M1168.8 622.9l-3 1.9l0 200.2l3 -1.9z"/>
<path fill="#43285c" stroke="#43285c" d="M1163 619.9l2.8 2.1l0 203l-2.8 -2.1z"/>
<path fill="#6c3d8f" stroke="#6c3d8f" d="M1334.1 519.5l-3 1.9l0 203l3 -1.9zM1322.1 527.1l-3 1.9l0 2.8l3 -1.9z"/>
<path fill="#55316f" stroke="#55316f" d="M1322.1 529.9l-3 1.9l0 200.2l3 -1.9z"/>
<path fill="#43285c" stroke="#43285c" d="M1316.3 527l2.8 2l0 203l-2.8 -2zM1235 578.3l2.8 2l0 203l-2.8 -2z"/>
<path fill="#6c3d8f" stroke="#6c3d8f" d="M1186.6 612.6l-3 1.9l0 203l3 -1.9zM1174.6 620.2l-3 1.9l0 2.8l3 -1.9z"/>
<path fill="#55316f" stroke="#55316f" d="M1174.6 623l-3 1.9l0 200.2l3 -1.9z"/>
<path fill="#43285c" stroke="#43285c" d="M1168.8 620.1l2.8 2l0 203l-2.8 -2z"/>
<path fill="#6c3d8f" stroke="#6c3d8f" d="M1333.9 523.5l-9 5.7l0 203l9 -5.7z"/>
<path fill="#43285c" stroke="#43285c" d="M1322.1 527.1l2.8 2.1l0 203l-2.8 -2.1zM1237.8 580.3l2.8 2.1l0 203l-2.8 -2.1z"/>
<path fill="#6c3d8f" stroke="#6c3d8f" d="M1186.4 616.6l-9 5.7l0 203l9 -5.7z"/>
<path fill="#43285c" stroke="#43285c" d="M1174.6 620.2l2.8 2.1l0 203l-2.8 -2.1zM1240.6 582.4l2.8 2l0 203l-2.8 -2z"/>
<path fill="#6c3d8f" stroke="#6c3d8f" d="M1276.3 567.4l-3 1.9l0 203l3 -1.9zM1249.2 584.5l-3 1.9l0 2.9l3 -1.9z"/>
<path fill="#55316f" stroke="#55316f" d="M1249.2 587.4l-3 1.9l0 200.1l3 -1.9z"/>
<path fill="#43285c" stroke="#43285c" d="M1243.4 584.4l2.8 2l0 203l-2.8 -2zM1249.2 584.5l2.8 2.1l0 203l-2.8 -2.1z"/>
<path fill="#6c3d8f" stroke="#6c3d8f" d="M1278.9 573.4l-3 1.9l0 203l3 -1.9zM1257.8 586.7l-3 1.9l0 2.8l3 -1.9z"/>
<path fill="#55316f" stroke="#55316f" d="M1257.8 589.5l-3 1.9l0 200.2l3 -1.9z"/>
<path fill="#43285c" stroke="#43285c" d="M1252 586.6l2.8 2l0 203l-2.8 -2zM1257.8 586.7l2.8 2.1l0 203l-2.8 -2.1z"/>
<path fill="#6c3d8f" stroke="#6c3d8f" d="M1281.4 579.4l-18 11.4l0 203l18 -11.4z"/>
<path fill="#43285c" stroke="#43285c" d="M1260.6 588.8l2.8 2l0 203l-2.8 -2z"/>
</g>
<path fill="#7d45a0" fill-rule="evenodd" d="M1278.3 372.1l-6 3.8l-2.8 -2l-6.1 3.8l-2.8 -2.1l-9 5.7l-2.8 -2l-9 5.7l-2.8 -2.1l-12.1 7.6l-2.7 -2l-3.1 1.9l-11.1 -8.2l-3 1.9l-5.6 -4.1l3 -1.9l-2.8 -2l3 -1.9l-2.8 -2.1l3 -1.9l-2.8 -2l3 -1.9l-2.8 -2l3 -1.9l-2.8 -2.1l3.1 -1.9l-2.8 -2l3 -1.9l-2.8 -2.1l3 -1.9l-5.6 -4l3 -1.9l-11.2 -8.2l-3 1.9l-5.6 -4.1l-15 9.5l2.8 2l-12.1 7.6l2.8 2.1l-12 7.6l2.8 2l-9.1 5.7l-5.5 -4.1l-3.1 1.9l-2.7 -2l-6.1 3.8l-2.8 -2l-3 1.9l-2.8 -2.1l3 -1.9l-8.3 -6.1l3 -1.9l-11.2 -8.2l3 -1.9l-19.6 -14.3l-3 1.9l-2.8 -2l-3 1.9l-2.8 -2.1l-9 5.7l2.8 2.1l-3 1.9l2.8 2l-6 3.8l2.7 2.1l-3 1.9l2.8 2l-3 1.9l2.8 2l-3 1.9l2.8 2.1l-3 1.9l2.8 2l-3 1.9l2.8 2.1l-3 1.9l5.5 4.1l-3 1.9l-2.8 -2.1l-9 5.7l-2.8 -2l-9 5.7l-5.6 -4.1l-3 1.9l-11.2 -8.2l-3 1.9l-11.2 -8.1l-3 1.9l-5.6 -4.1l-3 1.9l-5.6 -4.1l-18 11.4l5.5 4.1l-3 1.9l5.6 4.1l-3 1.9l11.2 8.1l-3 1.9l11.2 8.2l-3.1 1.9l5.6 4.1l-9 5.7l2.8 2l-9 5.7l2.8 2.1l-3 1.9l-5.6 -4.1l-3 1.9l-2.8 -2.1l-3.1 1.9l-2.7 -2l-3.1 1.9l-2.8 -2.1l-3 1.9l-2.8 -2l-3 1.9l-2.8 -2l-3 1.9l-2.8 -2.1l-6 3.8l-2.8 -2l-3 1.9l-2.8 -2.1l-9 5.7l2.8 2.1l-3 1.9l2.8 2l-3 1.9l19.5 14.3l3 -1.9l11.2 8.2l3 -1.9l8.4 6.1l3 -1.9l2.8 2.1l-3 1.9l2.8 2l-6 3.8l2.8 2l-3.1 1.9l5.6 4.1l-9 5.7l-2.8 -2l-12 7.6l-2.8 -2.1l-12.1 7.6l-2.8 -2l-15 9.5l5.6 4.1l-3 1.9l11.1 8.2l3.1 -1.9l5.5 4l3 -1.9l2.8 2.1l3.1 -1.9l2.7 2l3.1 -1.9l2.8 2.1l3 -1.9l2.8 2l3 -1.9l2.8 2l3 -1.9l2.8 2.1l3 -1.9l2.8 2l3 -1.9l5.6 4.1l-3 1.9l11.1 8.2l-3 1.9l2.8 2l-12 7.6l2.8 2.1l-9.1 5.7l2.8 2l-9 5.7l2.8 2.1l-6 3.8l2.8 2l-6 3.8l13.9 10.2l6 -3.8l2.8 2l6.1 -3.8l2.8 2.1l9 -5.7l2.8 2l9 -5.7l2.8 2.1l12.1 -7.6l2.7 2l3.1 -1.9l11.1 8.2l3 -1.9l5.6 4.1l-3 1.9l2.8 2l-3 1.9l2.8 2.1l-3 1.9l2.8 2l-3 1.9l2.8 2l-3 1.9l2.8 2.1l-3.1 1.9l2.8 2l-3 1.9l2.8 2.1l-3 1.9l5.6 4l-3 1.9l11.2 8.2l3 -1.9l5.6 4.1l15 -9.5l-2.8 -2l12.1 -7.6l-2.8 -2.1l12 -7.6l-2.8 -2l9.1 -5.7l5.5 4.1l3.1 -1.9l2.7 2l6.1 -3.8l2.8 2l3 -1.9l2.8 2.1l-3 1.9l8.3 6.1l-3 1.9l11.2 8.2l-3 1.9l19.6 14.3l3 -1.9l2.8 2l3 -1.9l2.8 2.1l9 -5.7l-2.8 -2.1l3 -1.9l-2.8 -2l6 -3.8l-2.7 -2.1l3 -1.9l-2.8 -2l3 -1.9l-2.8 -2l3 -1.9l-2.8 -2.1l3 -1.9l-2.8 -2l3 -1.9l-2.8 -2.1l3 -1.9l-5.5 -4.1l3 -1.9l2.8 2.1l9 -5.7l2.8 2l9 -5.7l5.6 4.1l3 -1.9l11.2 8.2l3 -1.9l11.2 8.1l3 -1.9l5.6 4.1l3 -1.9l5.6 4.1l18 -11.4l-5.5 -4.1l3 -1.9l-5.6 -4.1l3 -1.9l-11.2 -8.1l3 -1.9l-11.2 -8.2l3.1 -1.9l-5.6 -4.1l9 -5.7l-2.8 -2l9 -5.7l-2.8 -2.1l3 -1.9l5.6 4.1l3 -1.9l2.8 2.1l3.1 -1.9l2.7 2l3.1 -1.9l2.8 2.1l3 -1.9l2.8 2l3 -1.9l2.8 2l3 -1.9l2.8 2.1l6 -3.8l2.8 2l3 -1.9l2.8 2.1l9 -5.7l-2.8 -2.1l3 -1.9l-2.8 -2l3 -1.9l-19.5 -14.3l-3 1.9l-11.2 -8.2l-3 1.9l-8.4 -6.1l-3 1.9l-2.8 -2.1l3 -1.9l-2.8 -2l6 -3.8l-2.8 -2l3.1 -1.9l-5.6 -4.1l9 -5.7l2.8 2l12 -7.6l2.8 2.1l12.1 -7.6l2.8 2l15 -9.5l-5.6 -4.1l3 -1.9l-11.1 -8.2l-3.1 1.9l-5.5 -4l-3 1.9l-2.8 -2.1l-3.1 1.9l-2.7 -2l-3.1 1.9l-2.8 -2.1l-3 1.9l-2.8 -2l-3 1.9l-2.8 -2l-3 1.9l-2.8 -2.1l-3 1.9l-2.8 -2l-3 1.9l-5.6 -4.1l3 -1.9l-11.1 -8.2l3 -1.9l-2.8 -2l12 -7.6l-2.8 -2.1l9.1 -5.7l-2.8 -2l9 -5.7l-2.8 -2.1l6 -3.8l-2.8 -2l6 -3.8zM1185.8 415.2l36.3 26.6l-3 1.9l8.4 6.1l-3 1.9l8.4 6.1l-3 1.9l2.8 2.1l-3 1.9l5.5 4.1l-3 1.9l2.8 2l-3 1.9l2.8 2l-3 1.9l2.8 2.1l-3 1.9l2.8 2l-3 1.9l2.8 2.1l-3 1.9l2.8 2l-3.1 1.9l2.8 2l-6 3.8l2.8 2.1l-6 3.8l2.8 2l-9.1 5.7l2.8 2.1l-9 5.7l2.8 2l-30.1 19l-2.8 -2l-9 5.7l-2.8 -2.1l-9.1 5.7l-2.7 -2l-6.1 3.8l-2.8 -2.1l-6 3.8l-2.8 -2l-3 1.9l-2.8 -2l-3 1.9l-2.8 -2.1l-3 1.9l-2.8 -2l-3 1.9l-2.8 -2.1l-3 1.9l-2.8 -2l-3 1.9l-2.8 -2l-3 1.9l-5.6 -4.1l-3 1.9l-2.8 -2.1l-3 1.9l-8.4 -6.1l-3 1.9l-8.4 -6.1l-3 1.9l-36.3 -26.6l3 -1.9l-8.4 -6.1l3 -1.9l-8.4 -6.1l3 -1.9l-2.8 -2.1l3 -1.9l-5.5 -4.1l3 -1.9l-2.8 -2l3 -1.9l-2.8 -2l3 -1.9l-2.8 -2.1l3 -1.9l-2.8 -2l3 -1.9l-2.8 -2.1l3 -1.9l-2.8 -2l3.1 -1.9l-2.8 -2l6 -3.8l-2.8 -2.1l6 -3.8l-2.8 -2l9.1 -5.7l-2.8 -2.1l9 -5.7l-2.8 -2l30.1 -19l2.8 2l9 -5.7l2.8 2.1l9.1 -5.7l2.7 2l6.1 -3.8l2.8 2.1l6 -3.8l2.8 2l3 -1.9l2.8 2l3 -1.9l2.8 2.1l3 -1.9l2.8 2l3 -1.9l2.8 2.1l3 -1.9l2.8 2l3 -1.9l2.8 2l3 -1.9l5.6 4.1l3 -1.9l2.8 2.1l3 -1.9l8.4 6.1l3 -1.9l8.4 6.1z"/>
 <!-- selection box -->
 <g fill="none" stroke="#fff" stroke-opacity=".74" stroke-width="2.2" stroke-linejoin="round">
  <path d="M1145 258.3L801.8 474.9L1106.4 697.3L1449.6 480.9Z"/>
  <path d="M1145 461L801.8 677.6L1106.4 900L1449.6 683.6Z"/>
  <path d="M1145.2 258.3V461M801.8 474.9V677.6M1106.2 697.3V900M1449.6 480.9V683.6" stroke-width="2.6"/>
 </g>
 <!-- gizmo arrows -->
 <g stroke-width="3.2" stroke-linecap="butt" fill="none">
  <path d="M1125.7 479V418" stroke="#2f78bd"/>
  <path d="M1125.7 679V741" stroke="#2f78bd"/>
  <path d="M1298.6 469L1358 432.2" stroke="#c0222a"/>
  <path d="M953.4 688.6L894 725.6" stroke="#c0222a"/>
  <path d="M972.6 467L917 426.4" stroke="#b3a552"/>
  <path d="M1278.2 691L1334 731.8" stroke="#a39a34"/>
 </g>
 <path d="M1125.7 399.6L1136 418.6H1115.4Z" fill="#2f78bd"/>
 <path d="M1125.7 760L1136 740.6H1115.4Z" fill="#2f78bd"/>
 <path d="M1376.4 420.4L1366.6 440.6L1354.6 423.4Z" fill="#a11218"/>
 <path d="M875 737.6L884.8 717.4L896.8 734.6Z" fill="#a11218"/>
 <path d="M899.6 413.4L921.6 417L908.4 435.4Z" fill="#7d9c12"/>
 <path d="M1351.4 745L1329.4 741.4L1342.6 723Z" fill="#7d9c12"/>
 <!-- orientation cube -->
 <g stroke-linejoin="round">
  <path d="M1445.5 882.7L1373.1 928.3V1001.5L1440.5 1050.6L1514.2 1005.3V932.6Z" fill="#fff" fill-opacity=".085" stroke="none"/>
  <g fill="none" stroke="#fff" stroke-opacity=".42" stroke-width="1.3">
   <path d="M1445.5 882.7V955.3L1373.1 1001.5M1445.5 955.3L1514.2 1005.3"/>
  </g>
  <g fill="none" stroke="#fff" stroke-opacity=".74" stroke-width="1.5">
   <path d="M1440.5 977L1373.1 928.3L1445.5 882.7L1514.2 932.6ZM1373.1 928.3V1001.5M1514.2 932.6V1005.3"/>
  </g>
  <path d="M1440.5 977V1050.6" stroke="#3d8fdc" stroke-width="1.9" fill="none"/>
  <path d="M1440.5 1050.6L1373.1 1001.5" stroke="#9fc81c" stroke-width="1.9" fill="none"/>
  <path d="M1440.5 1050.6L1514.2 1005.3" stroke="#e0202a" stroke-width="1.9" fill="none"/>
 </g>
</svg>
<!-- viewport top toolbar -->
<div class="a" style="left:693.5px;top:65px;width:798.8px;height:45px;background:#393939"></div>
<div class="a" style="left:1495.6px;top:65px;width:64.9px;height:45px;background:#393939"></div>
<div class="a" style="left:1137px;top:65px;width:225px;height:45px;background:#141414"></div>
<div class="a" style="left:699.2px;top:69.6px;width:35.6px;height:35.6px;background:#595959;border-radius:4px"></div>
<div class="a" style="left:740.6px;top:69.6px;width:35.6px;height:35.6px;background:#595959;border-radius:4px"></div>
<div class="a" style="left:782px;top:69.6px;width:35.6px;height:35.6px;background:#595959;border-radius:4px"></div>
<div class="t" style="left:1170.4px;top:74px;font-size:24.2px;line-height:27px;color:#d4d4d4;transform:scaleX(1.061);transform-origin:0 0;">128</div>
<div class="t" style="left:1228.0px;top:74px;font-size:24.2px;line-height:27px;color:#d4d4d4;transform:scaleX(1.061);transform-origin:0 0;">128</div>
<div class="t" style="left:1285.6px;top:74px;font-size:24.2px;line-height:27px;color:#d4d4d4;transform:scaleX(1.061);transform-origin:0 0;">128</div>
<svg width="867" height="45" style="left:693.5px;top:65px" viewBox="693.5 65 867 45">
 <path d="M710.2 75.6V96.2L714.9 91.8L718.4 99.6L721.8 98L718.3 90.4L724.6 89.8Z" fill="#111"/>
 <path d="M749.4 85V78H756.4M760.8 78H768V85M768 90V97H760.8M756.4 97H749.4V90" fill="none" stroke="#111" stroke-width="3.1"/>
 <path d="M793.6 80.5V95.6H803.8V98.6H790.9Q789.5 98.6 789.5 97.2V80.5Z" fill="#111"/>
 <path d="M796.8 76H805V81H810V93.4Q810 94.9 808.5 94.9H796.8Q795.3 94.9 795.3 93.4V77.5Q795.3 76 796.8 76Z" fill="#111"/>
 <path d="M806.2 76.2L809.8 79.8H806.2Z" fill="#111"/>
 <!-- crop -->
 <path d="M1387.3 74.6V94.2H1406.8M1381.8 80.2H1401.7V100" fill="none" stroke="#f0f0f0" stroke-width="2.9"/>
 <!-- center -->
 <g stroke="#f0f0f0" stroke-width="2" fill="#f0f0f0">
  <path d="M1459.8 74.6V80M1459.8 100V94.6M1447 87.3H1452.4M1472.6 87.3H1467.2" fill="none"/>
  <path d="M1459.8 84.6L1456.6 80.6H1463ZM1459.8 90L1456.6 94H1463ZM1457.1 87.3L1453.1 84.1V90.5ZM1462.5 87.3L1466.5 84.1V90.5Z" stroke-width=".8"/>
 </g>
 <path d="M1519.6 96L1528 79.8L1536.4 96Z" fill="#e8e8e8"/>
</svg>
<!-- viewport bottom bar -->
<div class="a" style="left:693.5px;top:1084.8px;width:867.5px;height:70px;background:#3a3a3a"></div>
<div class="a" style="left:699.7px;top:1094.6px;width:42.5px;height:39.2px;background:#222;border-radius:6px"></div>
<div class="a" style="left:804px;top:1092.8px;width:318px;height:42.6px;background:#222;border-radius:9px"></div>
<div class="t m" style="left:821.2px;top:1100px;font-size:23.4px;line-height:28px;color:#a8a8a8;-webkit-text-stroke:.35px #a8a8a8;letter-spacing:0.59px;">console</div>
<div class="t" style="left:1133.7px;top:1101px;font-size:22.3px;line-height:25px;color:#8e8e8e;font-weight:normal;-webkit-text-stroke:1.25px #8e8e8e;transform:scaleX(1.034);transform-origin:0 0;">Pers</div>
<div class="t" style="left:1196.7px;top:1101px;font-size:22.3px;line-height:25px;color:#8e8e8e;font-weight:normal;-webkit-text-stroke:1.25px #8e8e8e;transform:scaleX(1.034);transform-origin:0 0;">Free</div>
<div class="t" style="left:1257.8px;top:1100px;font-size:24.1px;line-height:27px;color:#98c2f0;transform:scaleX(1.032);transform-origin:0 0;">Orth</div>
<div class="t" style="left:1330.2px;top:1101px;font-size:22.3px;line-height:25px;color:#8e8e8e;font-weight:normal;-webkit-text-stroke:1.25px #8e8e8e;transform:scaleX(1.073);transform-origin:0 0;">Iso</div>
<div class="t" style="left:1395.0px;top:1104px;font-size:17.9px;line-height:20px;color:#f4f4f4;font-weight:normal;-webkit-text-stroke:1.01px #f4f4f4;transform:scaleX(1.029);transform-origin:0 0;">0</div>
<svg width="867" height="58" style="left:693.5px;top:1085px" viewBox="693.5 1085 867 58">
 <path d="M713.6 1122L721.1 1107.8L728.6 1122Z" fill="#e8e8e8"/>
 <!-- camera -->
 <path d="M760.6 1104.4H765.8L767.8 1100.6Q768.2 1099.8 769.2 1099.8H777.2Q778.2 1099.8 778.6 1100.6L780.6 1104.4H785.8Q788.8 1104.4 788.8 1107.4V1123.2Q788.8 1126.2 785.8 1126.2H760.6Q757.6 1126.2 757.6 1123.2V1107.4Q757.6 1104.4 760.6 1104.4Z" fill="#e6e6e6"/>
 <circle cx="773.1" cy="1114.6" r="5.8" fill="none" stroke="#2c2c2c" stroke-width="3.2"/>
 <!-- history icon -->
 <path d="M1444 1103.2A11.4 11.4 0 1 1 1434.6 1120.2" fill="none" stroke="#f0f0f0" stroke-width="2.8"/>
 <path d="M1432.8 1102.6L1444.6 1114.4" fill="none" stroke="#f0f0f0" stroke-width="2.8"/>
 <path d="M1447.6 1108V1117.4H1438.2Z" fill="#f0f0f0"/>
 <!-- blocks -->
 <path d="M1489.8 1103.8H1500.6V1124.4H1479.6V1114.4H1489.8ZM1489.8 1114.4V1124.4M1489.8 1114.4H1500.6" fill="none" stroke="#f0f0f0" stroke-width="2.6"/>
 <!-- cube -->
 <path d="M1535.2 1101.6L1547.4 1108V1120.6L1535.2 1126.8L1523 1120.6V1108Z" fill="#fdc24e"/>
 <path d="M1535.2 1101.6L1547.4 1108L1535.2 1114.2L1523 1108Z" fill="#fed47e"/>
 <path d="M1523 1108L1535.2 1114.2V1126.8M1535.2 1114.2L1547.4 1108" fill="none" stroke="#3a3a3a" stroke-width="1.7"/>
</svg>
<!-- ===== right block: edit + shader panels ===== -->
<div class="pan" style="left:1561.4px;top:65px;width:475.2px;height:1090px;border-radius:5px 5px 0 0"></div>
<div class="trk" style="left:1766px;top:65.5px;width:10.2px;height:106.5px"></div>
<div class="trk" style="left:1766px;top:182px;width:10.2px;height:455px"></div>
<div class="t" style="left:1641.0px;top:74px;font-size:24.4px;line-height:27px;color:#8c8c8c;transform:scaleX(0.950);transform-origin:0 0;">Edit</div>
<div class="rb" style="left:1577.6px;top:119.3px;width:171.4px;height:47.6px;border-color:#6c6c6c;border-width:2px;border-radius:10px"></div>
<div class="t" style="left:1592.2px;top:129px;font-size:24.2px;line-height:27px;color:#a8d0f8;transform:scaleX(0.985);transform-origin:0 0;">All</div>
<svg width="190" height="50" style="left:1570px;top:118px" viewBox="1570 118 190 50">
 <g fill="#b4b4b4" stroke="none">
  <path d="M1652.2 132.4H1660.4L1652.2 140.6ZM1674.8 132.4V140.6L1666.6 132.4ZM1652.2 154V145.8L1660.4 154ZM1674.8 154H1666.6L1674.8 145.8Z"/>
  <!-- wrench -->
  <path d="M1711.6 133.4Q1716.6 131.6 1720.2 135.2Q1723 138.2 1722 142L1729.6 149.2Q1731.4 151.2 1729.6 153Q1727.8 154.6 1726 153L1718.4 145.6Q1714.4 146.8 1711.2 143.8Q1708.2 140.6 1709.4 136.2L1713.6 140.4L1716.8 139.6L1717.6 136.4L1713.4 132.4Z"/>
 </g>
 <path d="M1655.8 136L1671.2 150.4M1671.2 136L1655.8 150.4" stroke="#b4b4b4" stroke-width="3.2" fill="none"/>
</svg>
<svg width="12" height="12" style="left:1584.9px;top:203.6px" viewBox="1584.9 203.6 12 12"><path d="M1585.9 204.6h8.4l-4.2 8.4z" fill="#c6c6c6"/></svg><div class="t" style="left:1603.4px;top:199px;font-size:17.4px;line-height:20px;color:#c6c6c6;font-weight:normal;-webkit-text-stroke:0.98px #c6c6c6;transform:scaleX(0.986);transform-origin:0 0;">TOOL</div>
<div class="btn" style="left:1579px;top:236px;width:83.6px;height:49.8px;border-radius:4px 0 0 0"></div>
<div class="btn" style="left:1664.2px;top:236px;width:83.6px;height:49.8px;border-radius:0 4px 0 0"></div>
<div class="btn" style="left:1579px;top:288.2px;width:83.6px;height:50px;border-radius:0"></div>
<div class="btn" style="left:1664.2px;top:288.2px;width:83.6px;height:50px;border-radius:0"></div>
<div class="btn" style="left:1579px;top:341.6px;width:83.6px;height:50.2px;border-radius:0 0 0 4px"></div>
<div class="btn" style="left:1664.2px;top:341.6px;width:83.6px;height:50.2px;border-radius:0 0 4px 0"></div>
<svg width="12" height="12" style="left:1585.1px;top:413.5px" viewBox="1585.1 413.5 12 12"><path d="M1586.1 414.5h8.4l-4.2 8.4z" fill="#c6c6c6"/></svg><div class="t" style="left:1603.2px;top:409px;font-size:17.4px;line-height:20px;color:#c6c6c6;font-weight:normal;-webkit-text-stroke:0.98px #c6c6c6;transform:scaleX(0.867);transform-origin:0 0;">SELECT</div>
<div class="btn" style="left:1579px;top:446.5px;width:83.6px;height:49.8px;border-radius:4px 0 0 0"></div>
<div class="btn" style="left:1664.2px;top:446.5px;width:83.6px;height:49.8px;border-radius:0 4px 0 0"></div>
<div class="btn" style="left:1579px;top:499px;width:168.8px;height:49.8px;border-radius:0"></div>
<div class="btn" style="left:1579px;top:552.2px;width:83.6px;height:50px;border-radius:0"></div>
<div class="btn" style="left:1664.2px;top:552.2px;width:83.6px;height:50px;border-radius:0"></div>
<div class="btn" style="left:1579px;top:605.4px;width:168.8px;height:49.4px;border-radius:0 0 4px 4px"></div>
<div class="t" style="left:1603.9px;top:250px;font-size:20.2px;line-height:22px;color:#3a3a3a;transform:scaleX(0.955);transform-origin:0 0;">Full</div>
<div class="t" style="left:1692.4px;top:250px;font-size:20.2px;line-height:22px;color:#3a3a3a;transform:scaleX(0.952);transform-origin:0 0;">Fill</div>
<div class="t" style="left:1596.8px;top:302px;font-size:20.2px;line-height:22px;color:#3a3a3a;transform:scaleX(0.957);transform-origin:0 0;">Clear</div>
<div class="t" style="left:1688.7px;top:303px;font-size:18.7px;line-height:21px;color:#3a3a3a;font-weight:normal;-webkit-text-stroke:1.05px #3a3a3a;transform:scaleX(1.015);transform-origin:0 0;">Rev</div>
<div class="t" style="left:1609.8px;top:356px;font-size:18.7px;line-height:21px;color:#3a3a3a;font-weight:normal;-webkit-text-stroke:1.05px #3a3a3a;transform:scaleX(0.975);transform-origin:0 0;">2X</div>
<div class="t" style="left:1688.5px;top:356px;font-size:20.2px;line-height:22px;color:#3a3a3a;transform:scaleX(1.209);transform-origin:0 0;">1/2</div>
<div class="t" style="left:1608.3px;top:460px;font-size:20.2px;line-height:22px;color:#3a3a3a;transform:scaleX(1.026);transform-origin:0 0;">All</div>
<div class="t" style="left:1691.5px;top:460px;font-size:20.2px;line-height:22px;color:#3a3a3a;transform:scaleX(0.968);transform-origin:0 0;">Inv</div>
<div class="t" style="left:1637.9px;top:513px;font-size:20.2px;line-height:22px;color:#3a3a3a;transform:scaleX(0.995);transform-origin:0 0;">None</div>
<div class="t" style="left:1597.5px;top:567px;font-size:18.7px;line-height:21px;color:#3a3a3a;font-weight:normal;-webkit-text-stroke:1.05px #3a3a3a;transform:scaleX(1.050);transform-origin:0 0;">Copy</div>
<div class="t" style="left:1690.3px;top:567px;font-size:18.7px;line-height:21px;color:#3a3a3a;font-weight:normal;-webkit-text-stroke:1.05px #3a3a3a;transform:scaleX(1.032);transform-origin:0 0;">Cut</div>
<div class="t" style="left:1636.9px;top:619px;font-size:20.2px;line-height:22px;color:#3a3a3a;transform:scaleX(0.963);transform-origin:0 0;">Paste</div>
<div class="a" style="left:1573.8px;top:677px;width:179.4px;height:4.2px;background:#343434;border-radius:2px"></div>
<svg width="12" height="12" style="left:1585.6px;top:711.0px" viewBox="1585.6 711.0 12 12"><path d="M1586.3 711.8l8.8 4.6l-8.8 4.6z" fill="#9e9e9e"/></svg><div class="t" style="left:1603.1px;top:707px;font-size:17.4px;line-height:20px;color:#9e9e9e;font-weight:normal;-webkit-text-stroke:0.98px #9e9e9e;transform:scaleX(0.961);transform-origin:0 0;">ROT</div>
<svg width="12" height="12" style="left:1585.6px;top:765.0px" viewBox="1585.6 765.0 12 12"><path d="M1586.3 765.8l8.8 4.6l-8.8 4.6z" fill="#9e9e9e"/></svg><div class="t" style="left:1603.2px;top:761px;font-size:17.4px;line-height:20px;color:#9e9e9e;font-weight:normal;-webkit-text-stroke:0.98px #9e9e9e;transform:scaleX(0.896);transform-origin:0 0;">FLIP</div>
<svg width="12" height="12" style="left:1585.6px;top:819.0px" viewBox="1585.6 819.0 12 12"><path d="M1586.3 819.8l8.8 4.6l-8.8 4.6z" fill="#9e9e9e"/></svg><div class="t" style="left:1603.1px;top:815px;font-size:17.4px;line-height:20px;color:#9e9e9e;font-weight:normal;-webkit-text-stroke:0.98px #9e9e9e;transform:scaleX(0.973);transform-origin:0 0;">LOOP</div>
<svg width="12" height="12" style="left:1585.6px;top:873.0px" viewBox="1585.6 873.0 12 12"><path d="M1586.3 873.8l8.8 4.6l-8.8 4.6z" fill="#9e9e9e"/></svg><div class="t" style="left:1603.7px;top:869px;font-size:17.4px;line-height:20px;color:#9e9e9e;font-weight:normal;-webkit-text-stroke:0.98px #9e9e9e;transform:scaleX(0.891);transform-origin:0 0;">SCALE</div>
<svg width="12" height="12" style="left:1585.6px;top:927.0px" viewBox="1585.6 927.0 12 12"><path d="M1586.3 927.8l8.8 4.6l-8.8 4.6z" fill="#9e9e9e"/></svg><div class="t" style="left:1603.1px;top:923px;font-size:17.4px;line-height:20px;color:#9e9e9e;font-weight:normal;-webkit-text-stroke:0.98px #9e9e9e;transform:scaleX(1.016);transform-origin:0 0;">ROTATE</div>
<svg width="12" height="12" style="left:1585.6px;top:979.0px" viewBox="1585.6 979.0 12 12"><path d="M1586.3 979.8l8.8 4.6l-8.8 4.6z" fill="#9e9e9e"/></svg><div class="t" style="left:1603.1px;top:975px;font-size:17.4px;line-height:20px;color:#9e9e9e;font-weight:normal;-webkit-text-stroke:0.98px #9e9e9e;transform:scaleX(0.947);transform-origin:0 0;">REPEAT</div>
<svg width="12" height="12" style="left:1585.6px;top:1031.0px" viewBox="1585.6 1031.0 12 12"><path d="M1586.3 1031.8l8.8 4.6l-8.8 4.6z" fill="#9e9e9e"/></svg><div class="t" style="left:1603.1px;top:1027px;font-size:17.4px;line-height:20px;color:#9e9e9e;font-weight:normal;-webkit-text-stroke:0.98px #9e9e9e;transform:scaleX(1.029);transform-origin:0 0;">MIRROR</div>
<svg width="12" height="12" style="left:1585.6px;top:1085.0px" viewBox="1585.6 1085.0 12 12"><path d="M1586.3 1085.8l8.8 4.6l-8.8 4.6z" fill="#9e9e9e"/></svg><div class="t" style="left:1603.1px;top:1081px;font-size:17.4px;line-height:20px;color:#9e9e9e;font-weight:normal;-webkit-text-stroke:0.98px #9e9e9e;transform:scaleX(1.034);transform-origin:0 0;">DIAGONAL</div>
<div class="a" style="left:1573.8px;top:1126px;width:179.4px;height:4.2px;background:#343434;border-radius:2px"></div>
<!-- ===== shader panel ===== -->
<div class="t" style="left:1866.9px;top:74px;font-size:24.4px;line-height:27px;color:#8c8c8c;transform:scaleX(0.961);transform-origin:0 0;">Shader</div>
<div class="rb" style="left:1793px;top:119.3px;width:228px;height:47.8px;border-color:#6c6c6c;border-width:2px;border-radius:10px"></div>
<svg width="240" height="50" style="left:1790px;top:118px" viewBox="1790 118 240 50">
 <path d="M1806.4 135.4Q1806.4 134.2 1807.6 134.2H1813.6L1815.6 136.4H1825.8Q1827 136.4 1827 137.6V151.4Q1827 152.6 1825.8 152.6H1807.6Q1806.4 152.6 1806.4 151.4ZM1806.4 138.6H1827" fill="none" stroke="#b4b4b4" stroke-width="2.2" stroke-linejoin="round"/>
 <path d="M1859.6 145.2L1870.6 135.4" stroke="#b4b4b4" stroke-width="4.6" stroke-linecap="round" fill="none"/>
 <path d="M1850.6 153.6Q1852.2 152.4 1852.4 149.8Q1852.8 146.6 1855.6 146.6Q1858.6 146.6 1858.8 149.6Q1858.8 153 1855.6 153.8Q1853 154.4 1850.6 153.6Z" fill="#b4b4b4"/>
 <path d="M1901.6 137.6L1895 143.6L1901.6 149.6M1911.8 137.6L1918.4 143.6L1911.8 149.6M1909.6 133L1903.8 154.2" fill="none" stroke="#a8d0f8" stroke-width="3.4"/>
 <g fill="#b4b4b4"><circle cx="1947.5" cy="135.2" r="3.3"/><circle cx="1947.5" cy="150.8" r="3.3"/><circle cx="1957.4" cy="147.8" r="3.3"/></g>
 <path d="M1947.5 135.2V150.8M1947.5 141.6Q1956.6 141 1957.4 147.8" fill="none" stroke="#b4b4b4" stroke-width="2.1"/>
 <path d="M1992.6 134.6V146M2000.8 140.6V152.6" fill="none" stroke="#b4b4b4" stroke-width="2.3"/>
 <path d="M1992.6 131.6L1997 137.2H1988.2ZM2000.8 155.4L1996.4 149.8H2005.2Z" fill="#b4b4b4"/>
</svg>
<svg width="12" height="12" style="left:1792.8px;top:203.4px" viewBox="1792.8 203.4 12 12"><path d="M1793.8 204.4h8.4l-4.2 8.4z" fill="#c6c6c6"/></svg><div class="t" style="left:1811.7px;top:199px;font-size:17.4px;line-height:20px;color:#c6c6c6;font-weight:normal;-webkit-text-stroke:0.98px #c6c6c6;transform:scaleX(0.979);transform-origin:0 0;">ARG</div>
<div class="t" style="left:1811.0px;top:251px;font-size:19.2px;line-height:21px;color:#808080;transform:scaleX(1.010);transform-origin:0 0;">Teeth</div>
<div class="t" style="left:1810.0px;top:301px;font-size:19.2px;line-height:21px;color:#808080;transform:scaleX(0.978);transform-origin:0 0;">Inner</div>
<div class="a" style="left:1899.4px;top:237.6px;width:85.4px;height:46.6px;background:#515151"></div>
<div class="a" style="left:1899.4px;top:287.6px;width:85.4px;height:47.2px;background:#515151"></div>
<div class="t m" style="left:1907.4px;top:252px;font-size:17.4px;line-height:20px;color:#f0f0f0;-webkit-text-stroke:.35px #f0f0f0;letter-spacing:2.30px;">12</div>
<div class="t m" style="left:1907.8px;top:302px;font-size:17.4px;line-height:20px;color:#f0f0f0;-webkit-text-stroke:.35px #f0f0f0;letter-spacing:0.84px;">0.50</div>
<svg width="20" height="110" style="left:1988px;top:235px" viewBox="1988 235 20 110">
 <path d="M1997.6 250L2002.7 258.4H1992.5ZM1997.6 272L2002.7 264H1992.5ZM1997.6 300.5L2002.7 308.9H1992.5ZM1997.6 322.5L2002.7 314.5H1992.5Z" fill="#686868"/>
</svg>
<div class="a" style="left:2016px;top:235px;width:9.8px;height:121.5px;background:#4c4c4c;border-radius:5px"></div>
<svg width="12" height="12" style="left:1792.8px;top:450.2px" viewBox="1792.8 450.2 12 12"><path d="M1793.8 451.2h8.4l-4.2 8.4z" fill="#c6c6c6"/></svg><div class="t" style="left:1810.9px;top:446px;font-size:17.4px;line-height:20px;color:#c6c6c6;font-weight:normal;-webkit-text-stroke:0.98px #c6c6c6;transform:scaleX(0.965);transform-origin:0 0;">SHADER</div>
<svg width="90" height="34" style="left:1925px;top:440px" viewBox="1925 440 90 34">
 <path d="M1932.4 446V465.4L1947.8 455.7Z" fill="#f0f0f0"/>
 <path d="M1997.6 447.6A9.4 9.4 0 1 1 1988.6 454.4" fill="none" stroke="#f0f0f0" stroke-width="2.5"/>
 <path d="M1991.4 447.6L1998 441.4V453.8Z" fill="#f0f0f0"/>
</svg>
<div class="a" style="left:1787px;top:482.4px;width:239.4px;height:606.8px;background:#2e2e2e;border-radius:5px"></div>
<div class="a" style="left:2016.2px;top:484px;width:9.8px;height:385px;background:#4c4c4c;border-radius:5px"></div>
<div class="a" style="left:1787px;top:1078px;width:116.6px;height:11px;background:#4c4c4c;border-radius:5.5px"></div>
<svg width="12" height="12" style="left:1798px;top:500px" viewBox="1798 500 12 12"><path d="M1799 501.4h9.4l-4.7 9.4z" fill="#fdc010"/></svg>
<div class="t" style="left:1815.5px;top:495px;font-size:21.2px;line-height:24px;color:#fdc02c;transform:scaleX(0.984);transform-origin:0 0;">shader</div>
<div class="a" style="left:1794px;top:529.3px;width:214.4px;height:46.3px;background:#5a5a5a;border-radius:3px"></div>
<div class="t" style="left:1800.9px;top:541px;font-size:21.2px;line-height:24px;color:#f4f4f4;transform:scaleX(1.004);transform-origin:0 0;">gear</div>
<div class="t" style="left:1801.4px;top:588px;font-size:21.2px;line-height:24px;color:#9a9a9a;transform:scaleX(1.018);transform-origin:0 0;">mandelbulb</div>
<div class="t" style="left:1801.4px;top:635px;font-size:21.2px;line-height:24px;color:#9a9a9a;transform:scaleX(0.990);transform-origin:0 0;">poly</div>
<div class="t" style="left:1801.4px;top:681px;font-size:21.2px;line-height:24px;color:#9a9a9a;transform:scaleX(1.016);transform-origin:0 0;">round</div>
<div class="t" style="left:1802.1px;top:728px;font-size:21.2px;line-height:24px;color:#9a9a9a;transform:scaleX(0.973);transform-origin:0 0;">sphere</div>
<div class="t" style="left:1802.6px;top:775px;font-size:21.2px;line-height:24px;color:#9a9a9a;transform:scaleX(0.975);transform-origin:0 0;">torus</div>
<svg width="12" height="12" style="left:1792.8px;top:1111.0px" viewBox="1792.8 1111.0 12 12"><path d="M1793.5 1111.8l8.8 4.6l-8.8 4.6z" fill="#9e9e9e"/></svg><div class="t" style="left:1810.3px;top:1107px;font-size:17.4px;line-height:20px;color:#9e9e9e;font-weight:normal;-webkit-text-stroke:0.98px #9e9e9e;transform:scaleX(0.959);transform-origin:0 0;">EXPORT</div>
</div>
</body>
</html>
